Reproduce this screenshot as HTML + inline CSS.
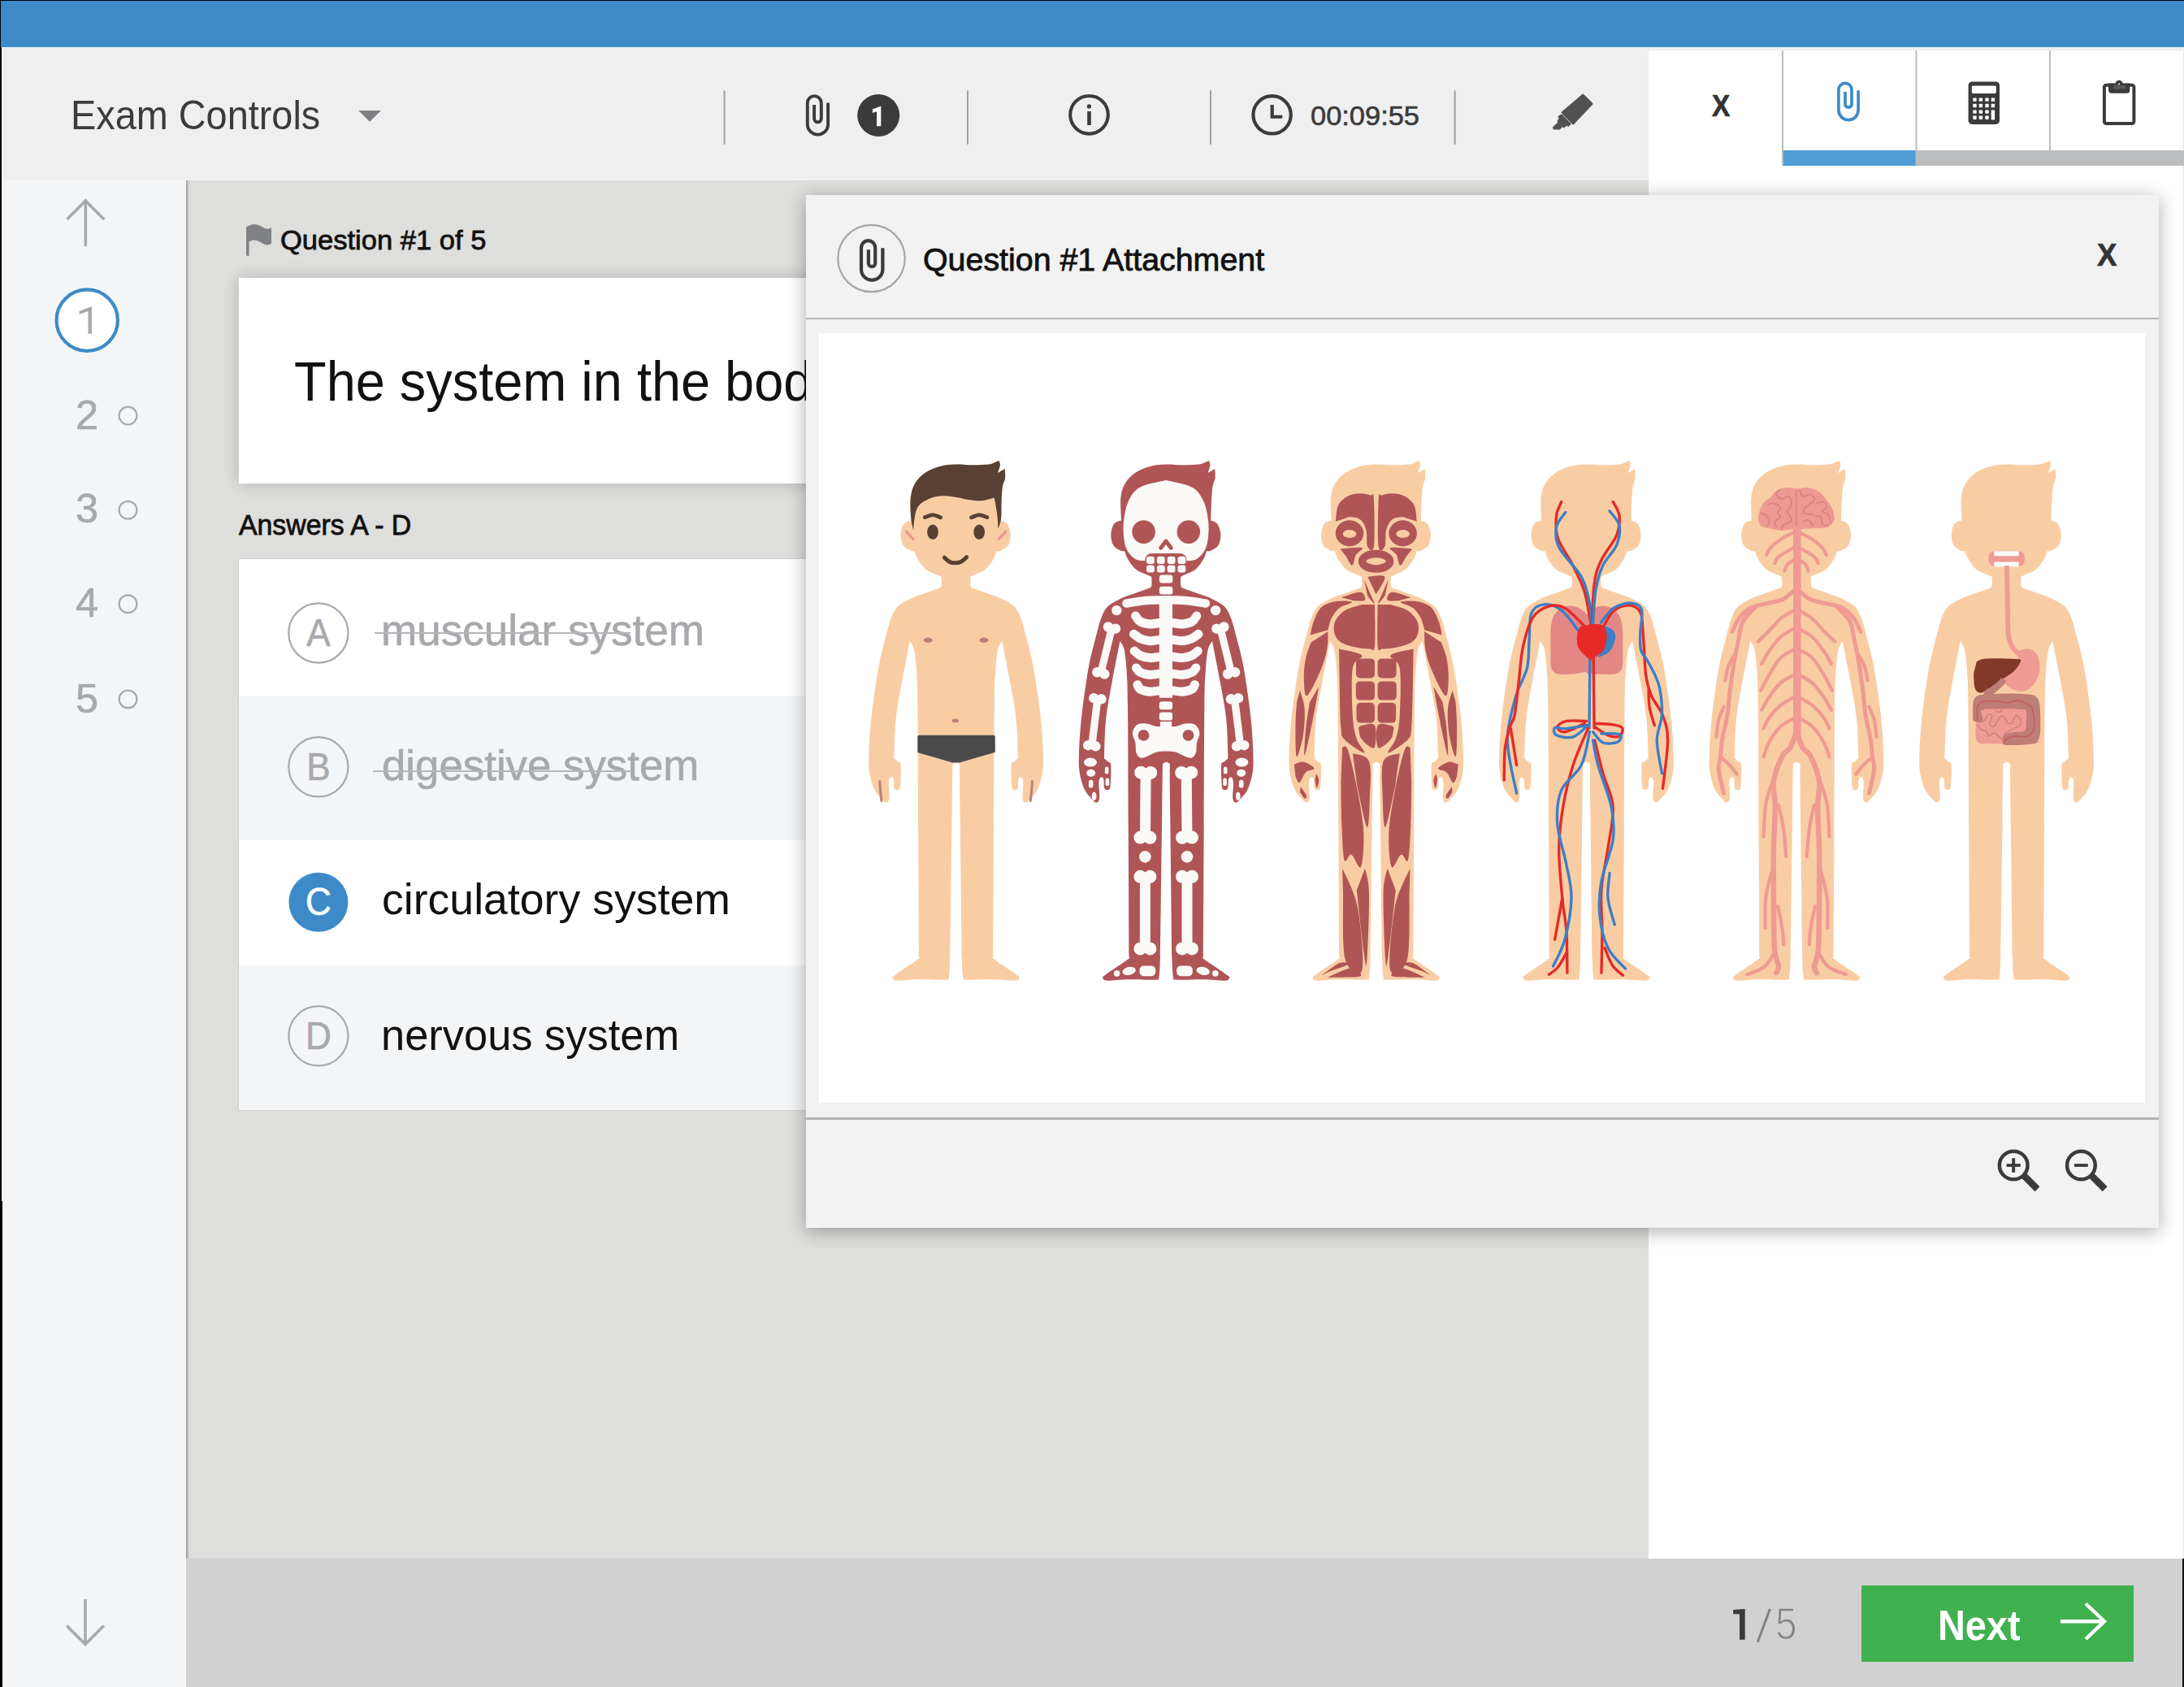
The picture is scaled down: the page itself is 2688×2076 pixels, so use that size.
<!DOCTYPE html>
<html><head><meta charset="utf-8">
<style>
html,body{margin:0;padding:0;}
body{width:2688px;height:2076px;position:relative;overflow:hidden;background:#fff;font-family:"Liberation Sans",sans-serif;}
.a{position:absolute;}
.t{position:absolute;white-space:nowrap;line-height:1;transform-origin:0 0;}
svg{position:absolute;overflow:visible;}
</style></head><body>
<div class="a" style="left:0;top:0;width:2688px;height:1px;background:#000"></div>
<div class="a" style="left:0;top:1px;width:2688px;height:57px;background:#3d8ac8"></div>
<div class="a" style="left:0;top:58px;width:2688px;height:164px;background:#efefef"></div>
<div class="a" style="left:2029px;top:62px;width:658px;height:1856px;background:#fff"></div>
<div class="a" style="left:2687px;top:62px;width:1px;height:1856px;background:#e6e6e6"></div>
<div class="a" style="left:0;top:222px;width:229px;height:1854px;background:#f4f5f7"></div>
<div class="a" style="left:229px;top:222px;width:1800px;height:1696px;background:#dededc;box-shadow:inset 4px 0 3px -2px rgba(0,0,0,0.3)"></div>
<div class="a" style="left:229px;top:1918px;width:2459px;height:158px;background:#d1d1d1"></div>
<div class="a" style="left:2686px;top:1918px;width:2px;height:158px;background:#111"></div>
<div class="a" style="left:0;top:1px;width:1px;height:57px;background:#000"></div>
<div class="a" style="left:0;top:58px;width:2px;height:1420px;background:#000"></div>
<div class="a" style="left:2px;top:58px;width:1px;height:1420px;background:#fff"></div>
<div class="a" style="left:0;top:1478px;width:3px;height:598px;background:#000"></div>
<!-- header icons -->
<svg style="left:0;top:0" width="2688" height="230">
 <path d="M441.2 135.9 L469 135.9 L455.1 149.8 Z" fill="#808185"/>
 <g fill="#a0a1a3"><rect x="890.6" y="111.3" width="2" height="66.5"/><rect x="1190" y="111.3" width="2" height="66.5"/><rect x="1489" y="111.3" width="2" height="66.5"/><rect x="1789.6" y="111.3" width="2" height="66.5"/></g>
 <path d="M1002.1 129 V146 A4.35 4.35 0 0 0 1010.8 146 V126.6 A8.5 8.5 0 0 0 993.8 126.6 V153 A12.65 12.65 0 0 0 1019.1 153 V126.5" fill="none" stroke="#3b3b3b" stroke-width="3.9"/>
 <circle cx="1081.2" cy="141.9" r="26" fill="#3b3b3b"/>
 <circle cx="1340.5" cy="141.3" r="23.3" fill="none" stroke="#3b3b3b" stroke-width="4.1"/>
 <circle cx="1340.4" cy="130.9" r="2.6" fill="#3b3b3b"/>
 <rect x="1338.2" y="137" width="4.6" height="17" fill="#3b3b3b"/>
 <circle cx="1565.6" cy="141.3" r="23.2" fill="none" stroke="#3b3b3b" stroke-width="4.2"/>
 <path d="M1563.6 129 H1567.8 V141.7 H1578.2 V145.7 H1563.6 Z" fill="#3b3b3b"/>
 <g fill="#515151" stroke="#515151" stroke-width="1.5" stroke-linejoin="round">
  <path d="M1922.3 138.4 L1947.8 116.6 Q1948.2 116.2 1948.7 116.6 L1959.5 127.3 Q1960 127.8 1959.5 128.3 L1936.6 152.4 Q1936.2 152.8 1935.7 152.4 Z"/>
  <path d="M1921.8 141 L1932.9 152.4 L1930.4 155.1 L1928.1 153.9 L1924.5 156.6 L1917.1 149.3 L1919.6 145.4 L1918.1 143.5 Z"/>
  <path d="M1917.5 151.2 L1922.1 156 L1919.6 158.7 L1912.3 158.7 L1911.6 157 Z"/>
 </g>
</svg>
<!-- right panel tabs -->
<div class="a" style="left:2194px;top:184.5px;width:164px;height:19px;background:#4f9ed6"></div>
<div class="a" style="left:2358px;top:184.5px;width:330px;height:19px;background:#bcbdbf"></div>
<svg style="left:0;top:0" width="2688" height="230">
 <g fill="#bbbdbf"><rect x="2193" y="62" width="2" height="141"/><rect x="2357.5" y="62" width="2" height="141"/><rect x="2522" y="62" width="2" height="141"/></g>
 <path d="M2271 113 V128.6 A4.04 4.04 0 0 0 2279 128.6 V110.5 A8.05 8.05 0 0 0 2262.9 110.5 V135.6 A12.1 12.1 0 0 0 2287.1 135.6 V111.2" fill="none" stroke="#3d8ac8" stroke-width="3.7"/>
 <rect x="2422.6" y="100.5" width="38.4" height="52.4" rx="4.5" fill="#3b3b3b"/>
 <rect x="2426.8" y="105.6" width="30" height="9.4" rx="1.5" fill="#fff"/>
 <g fill="#fff">
  <rect x="2428.3" y="120.4" width="4.4" height="4.4" rx="0.8"/><rect x="2435.7" y="120.4" width="4.4" height="4.4" rx="0.8"/><rect x="2443.3" y="120.4" width="4.4" height="4.4" rx="0.8"/><rect x="2450.7" y="120.4" width="4.4" height="4.4" rx="0.8"/>
  <rect x="2428.3" y="127.8" width="4.4" height="4.4" rx="0.8"/><rect x="2435.7" y="127.8" width="4.4" height="4.4" rx="0.8"/><rect x="2443.3" y="127.8" width="4.4" height="4.4" rx="0.8"/><rect x="2450.7" y="127.8" width="4.4" height="4.4" rx="0.8"/>
  <rect x="2428.3" y="135.4" width="4.4" height="4.4" rx="0.8"/><rect x="2435.7" y="135.4" width="4.4" height="4.4" rx="0.8"/><rect x="2443.3" y="135.4" width="4.4" height="4.4" rx="0.8"/>
  <rect x="2428.3" y="142.5" width="4.4" height="4.4" rx="0.8"/><rect x="2435.7" y="142.5" width="4.4" height="4.4" rx="0.8"/><rect x="2443.3" y="142.5" width="4.4" height="4.4" rx="0.8"/>
  <rect x="2450.7" y="135.5" width="4.4" height="11.9" rx="0.8"/>
 </g>
 <rect x="2589.9" y="104.8" width="36.5" height="47.2" rx="2.5" fill="none" stroke="#3b3b3b" stroke-width="4"/>
 <path d="M2595 102.6 H2621.4 V110.7 Q2621.4 114.7 2617.4 114.7 H2599 Q2595 114.7 2595 110.7 Z" fill="#3b3b3b"/>
 <circle cx="2608.1" cy="103.5" r="4.7" fill="#3b3b3b"/>
 <circle cx="2608.1" cy="103.5" r="1" fill="#fff"/>
 <rect x="2601" y="104.8" width="15" height="4.7" fill="#555"/>
</svg>
<div class="t" style="left:87.3px;top:116.5px;font-size:50.87px;color:#3b3b3b;font-weight:normal;transform:scaleX(0.9212);">Exam Controls</div>
<div class="t" style="left:1613.1px;top:126.1px;font-size:33.52px;color:#3b3b3b;font-weight:normal;transform:scaleX(1.0269);-webkit-text-stroke:0.6px #3b3b3b;">00:09:55</div>
<svg style="left:0;top:0" width="1200" height="200"><path d="M1084.3 130.8 V155.3 H1079 V137.3 L1073.9 138.9 V134.6 L1083.6 130.8 Z" fill="#fff"/></svg>
<div class="t" style="left:2106.7px;top:113.0px;font-size:36.52px;color:#333;font-weight:bold;transform:scaleX(0.9127);-webkit-text-stroke:0.7px #333;">X</div>
<div class="t" style="left:344.5px;top:278.2px;font-size:34.14px;color:#111;font-weight:normal;transform:scaleX(1.0117);-webkit-text-stroke:0.8px #111;">Question #1 of 5</div>
<svg style="left:0;top:0" width="400" height="2076">
 <path d="M303 279.5 Q313 273 321.5 278.5 Q329 284 334 280.3 V299.3 Q329 304 321.5 298.5 Q313 293 306.5 297.5 V314.8 H303 Z" fill="#808185"/>
 <path d="M105.3 246.5 V303 M82.4 270 L105.3 247.1 L128.2 270" fill="none" stroke="#a7a9ac" stroke-width="3.6"/>
 <path d="M105 1968 V2024.5 M82.1 2000.5 L105 2023.4 L127.9 2000.5" fill="none" stroke="#a7a9ac" stroke-width="3.6"/>
 <circle cx="107.2" cy="394.1" r="37.7" fill="#fff" stroke="#3d8ac8" stroke-width="4.2"/>
 <g fill="none" stroke="#a7a9ac" stroke-width="2.2"><circle cx="157.5" cy="511.6" r="10.9"/><circle cx="157.5" cy="627.8" r="10.9"/><circle cx="157.5" cy="743.3" r="10.9"/><circle cx="157.5" cy="860.4" r="10.9"/></g>
</svg>
<div class="a" style="left:294px;top:341.5px;width:1670px;height:253.5px;background:#fff;box-shadow:0 0 20px rgba(0,0,0,0.2)"></div>
<div class="t" style="left:361.7px;top:436.1px;font-size:67.83px;color:#111;font-weight:normal;transform:scaleX(0.9566);">The system in the body</div>
<div class="t" style="left:294.3px;top:628.8px;font-size:34.43px;color:#111;font-weight:normal;transform:scaleX(0.982);-webkit-text-stroke:0.8px #111;">Answers A - D</div>
<div class="a" style="left:294px;top:687.7px;width:1670px;height:678.7px;box-shadow:0 0 2px rgba(0,0,0,0.18)"></div>
<div class="a" style="left:294px;top:687.7px;width:1670px;height:169.5px;background:#fff"></div>
<div class="a" style="left:294px;top:857.2px;width:1670px;height:177.1px;background:#f4f5f7"></div>
<div class="a" style="left:294px;top:1034.3px;width:1670px;height:153.7px;background:#fff"></div>
<div class="a" style="left:294px;top:1188px;width:1670px;height:178.4px;background:#f4f5f7"></div>
<svg style="left:0;top:0" width="1000" height="1400">
 <g fill="none" stroke="#a7a9ac" stroke-width="2.2"><circle cx="391.9" cy="779" r="36.6"/><circle cx="391.9" cy="943.8" r="36.6"/><circle cx="391.9" cy="1274.8" r="36.6"/></g>
 <circle cx="391.9" cy="1110.3" r="36.5" fill="#3d8ac8"/>
 <g font-family="Liberation Sans" font-size="48" text-anchor="middle" stroke-width="0.6">
  <text x="391.9" y="794.8" fill="#a7a9ac" stroke="#a7a9ac" transform="translate(391.9 0) scale(0.92 1) translate(-391.9 0)">A</text>
  <text x="391.9" y="959.6" fill="#a7a9ac" stroke="#a7a9ac" transform="translate(391.9 0) scale(0.92 1) translate(-391.9 0)">B</text>
  <text x="391.9" y="1126.1" fill="#fff" stroke="#fff" transform="translate(391.9 0) scale(0.92 1) translate(-391.9 0)">C</text>
  <text x="391.9" y="1290.6" fill="#a7a9ac" stroke="#a7a9ac" transform="translate(391.9 0) scale(0.92 1) translate(-391.9 0)">D</text>
 </g>
</svg>
<div class="t" style="left:468.9px;top:748.2px;font-size:54.25px;color:#a7a9ac;font-weight:normal;transform:scaleX(0.9778);-webkit-text-stroke:0.6px #a7a9ac;">muscular system</div>
<div class="t" style="left:470.2px;top:915.5px;font-size:52.43px;color:#a7a9ac;font-weight:normal;transform:scaleX(1.0072);-webkit-text-stroke:0.6px #a7a9ac;">digestive system</div>
<div class="t" style="left:469.6px;top:1079.3px;font-size:54.07px;color:#111;font-weight:normal;transform:scaleX(0.9916);">circulatory system</div>
<div class="t" style="left:469.4px;top:1246.9px;font-size:53.58px;color:#111;font-weight:normal;transform:scaleX(0.9787);">nervous system</div>
<div class="a" style="left:461px;top:778px;width:315px;height:2.2px;background:#b4b5b8"></div>
<div class="a" style="left:459px;top:947.6px;width:317px;height:2.2px;background:#b4b5b8"></div>
<svg style="left:0;top:0" width="200" height="450"><path d="M112.9 377.2 V410.7 H108.5 V383 L97.5 386.8 V383 L112.2 377.2 Z" fill="#a7a9ac"/></svg>
<div class="t" style="left:93.2px;top:486.6px;font-size:49.57px;color:#a7a9ac;font-weight:normal;transform:scaleX(1.0196);-webkit-text-stroke:0.6px #a7a9ac;">2</div>
<div class="t" style="left:93.2px;top:602.1px;font-size:49.57px;color:#a7a9ac;font-weight:normal;transform:scaleX(1.0196);-webkit-text-stroke:0.6px #a7a9ac;">3</div>
<div class="t" style="left:93.2px;top:718.3px;font-size:49.57px;color:#a7a9ac;font-weight:normal;transform:scaleX(1.0196);-webkit-text-stroke:0.6px #a7a9ac;">4</div>
<div class="t" style="left:93.2px;top:835.8px;font-size:49.57px;color:#a7a9ac;font-weight:normal;transform:scaleX(1.0196);-webkit-text-stroke:0.6px #a7a9ac;">5</div>
<svg style="left:0;top:0" width="2688" height="2076"><path d="M2147.7 1980 V2017.7 H2141 V1986.2 L2133.2 1986.2 V1980.9 L2146.8 1980 Z" fill="#3b3b3b"/></svg>
<svg style="left:0;top:0" width="2688" height="2076"><path d="M2163.3 2020.7 L2178.4 1980" stroke="#808185" stroke-width="3"/></svg>
<div class="t" style="left:2185.1px;top:1971.4px;font-size:55.43px;color:#808185;font-weight:normal;transform:scaleX(0.866);-webkit-text-stroke:1.6px #d1d1d1;">5</div>
<div class="a" style="left:2291px;top:1951px;width:334.5px;height:94px;background:#40b14f"></div>
<svg style="left:0;top:0" width="2688" height="2076">
 <path d="M2536 1995.2 H2590 M2567 1973.5 L2590 1995.2 L2567 2017" fill="none" stroke="#fff" stroke-width="4.4"/>
</svg>
<div class="t" style="left:2384.8px;top:1973.7px;font-size:52.32px;color:#fff;font-weight:bold;transform:scaleX(0.8953);">Next</div>

<div class="a" style="left:991.5px;top:240px;width:1665.5px;height:1271px;background:#f2f2f2;box-shadow:0 4px 22px rgba(0,0,0,0.33)"></div>
<div class="a" style="left:991.5px;top:390.5px;width:1665.5px;height:2.5px;background:#b3b4b6"></div>
<div class="a" style="left:991.5px;top:1375px;width:1665.5px;height:2.5px;background:#b3b4b6"></div>
<div class="a" style="left:1008px;top:410px;width:1632px;height:947px;background:#fff"></div>
<svg style="left:0;top:0" width="2688" height="2076">
 <circle cx="1072.5" cy="318" r="41.2" fill="none" stroke="#a5a6a9" stroke-width="2.2"/>
 <path d="M1068.9 307.2 V324 A4.15 4.15 0 0 0 1077.2 324 V304.8 A8.6 8.6 0 0 0 1060 304.8 V331.4 A13.2 13.2 0 0 0 1086.4 331.4 V305.2" fill="none" stroke="#3b3b3b" stroke-width="4.2"/>
 <g fill="none" stroke="#3b3b3b" stroke-width="4.5"><circle cx="2478.2" cy="1434" r="17.35"/><circle cx="2561.4" cy="1434" r="17.35"/></g>
 <g stroke="#3b3b3b" stroke-width="8.3"><path d="M2490.5 1446.3 L2507.5 1463.3"/><path d="M2573.7 1446.3 L2590.7 1463.3"/></g>
 <g fill="#3b3b3b"><rect x="2469.6" y="1432.1" width="17.1" height="3.8"/><rect x="2476.2" y="1425.3" width="3.9" height="17.5"/><rect x="2553" y="1432.1" width="16.8" height="3.8"/></g>
</svg>
<div class="t" style="left:1135.7px;top:301.4px;font-size:38.0px;color:#111;font-weight:normal;transform:scaleX(1.0358);-webkit-text-stroke:0.8px #111;">Question #1 Attachment</div>

<div class="t" style="left:2580.6px;top:293.7px;font-size:39.13px;color:#333;font-weight:bold;transform:scaleX(0.9351);-webkit-text-stroke:0.7px #333;">X</div>

<svg style="left:0;top:0" width="2688" height="2076">
<defs><path id="sil" d="M100.0 173.4 L66.7 185.2 C63.7 186.9 53.4 191.4 48.9 195.6 C44.4 199.8 42.6 203.8 40.0 210.4 C37.4 217.0 35.5 225.6 33.0 235.0 C30.5 244.4 27.5 255.5 25.2 267.0 C22.9 278.5 21.0 291.8 19.3 304.1 C17.6 316.5 15.9 328.8 14.8 341.1 C13.7 353.5 12.8 368.3 12.6 378.2 C12.3 388.1 12.2 393.2 13.3 400.4 C14.4 407.6 16.8 415.8 19.3 421.2 C21.8 426.6 25.9 430.3 28.2 433.0 C30.5 435.7 31.8 437.1 33.3 437.5 C34.8 437.9 36.2 436.7 37.0 435.2 C37.8 433.7 37.8 431.9 37.8 428.6 C37.8 425.3 36.9 418.7 37.0 415.2 C37.1 411.7 37.6 409.3 38.2 407.8 C38.8 406.3 40.4 406.6 40.8 406.3 C41.2 406.8 42.5 407.1 43.0 409.3 C43.5 411.5 43.0 417.6 43.7 419.7 C44.4 421.8 46.2 422.1 47.4 421.9 C48.6 421.6 50.4 423.3 51.1 418.2 C51.9 413.1 52.3 396.6 51.9 391.5 C51.5 386.4 50.1 389.0 48.9 387.8 C47.7 386.6 45.4 385.7 44.5 384.1 C43.6 382.5 43.5 386.6 43.7 378.2 C43.9 369.8 44.3 348.5 45.9 333.7 C47.5 318.9 50.4 305.1 53.3 289.3 C56.1 273.5 61.4 247.3 63.0 238.9 C63.9 240.6 66.9 243.4 68.2 249.3 C69.5 255.2 70.4 262.9 71.1 274.5 C71.8 286.1 72.2 284.6 72.6 318.9 C73.0 353.1 73.2 428.5 73.4 480.0 C73.7 531.5 74.0 603.2 74.1 627.8 C73.8 628.3 77.5 627.1 72.6 630.8 C67.7 634.5 49.6 646.2 44.5 650.0 C39.4 653.8 41.7 652.7 42.2 653.8 C42.7 654.9 42.1 656.5 47.4 656.7 C52.7 656.9 64.2 655.4 74.1 655.2 C84.0 655.0 100.5 656.2 106.7 655.7 C112.9 655.2 110.1 656.9 111.1 652.3 C112.1 647.6 112.3 631.9 112.6 627.8 C113.0 598.2 114.3 489.6 114.8 450.0 C115.3 410.4 115.5 400.0 115.6 390.0 C116.3 389.6 118.5 387.8 120.0 387.8 C121.5 387.8 123.8 389.6 124.5 390.0 C124.1 400.0 124.3 410.4 124.8 450.0 C125.3 489.6 126.6 598.2 127.0 627.8 C127.2 631.9 127.5 647.6 128.5 652.3 C129.5 656.9 126.7 655.2 132.9 655.7 C139.1 656.2 155.6 655.0 165.5 655.2 C175.4 655.4 186.9 656.9 192.2 656.7 C197.5 656.5 196.9 654.9 197.4 653.8 C197.9 652.7 200.2 653.8 195.1 650.0 C190.0 646.2 171.9 634.5 167.0 630.8 C162.1 627.1 165.8 628.3 165.5 627.8 C165.6 603.2 165.9 531.5 166.2 480.0 C166.4 428.5 166.6 353.1 167.0 318.9 C167.4 284.6 167.8 286.1 168.5 274.5 C169.2 262.9 170.0 255.2 171.4 249.3 C172.7 243.4 175.7 240.6 176.6 238.9 C178.2 247.3 183.5 273.5 186.3 289.3 C189.2 305.1 192.1 318.9 193.7 333.7 C195.3 348.5 195.7 369.8 195.9 378.2 C196.1 386.6 196.0 382.5 195.1 384.1 C194.2 385.7 191.9 386.6 190.7 387.8 C189.5 389.0 188.1 386.4 187.7 391.5 C187.3 396.6 187.8 413.1 188.5 418.2 C189.2 423.3 191.0 421.6 192.2 421.9 C193.4 422.1 195.2 421.8 195.9 419.7 C196.6 417.6 196.1 411.5 196.6 409.3 C197.1 407.1 198.4 406.8 198.8 406.3 C199.2 406.6 200.8 406.3 201.4 407.8 C202.0 409.3 202.5 411.7 202.6 415.2 C202.7 418.7 201.8 425.3 201.8 428.6 C201.8 431.9 201.8 433.7 202.6 435.2 C203.3 436.7 204.8 437.9 206.3 437.5 C207.8 437.1 209.1 435.7 211.4 433.0 C213.7 430.3 217.8 426.6 220.3 421.2 C222.8 415.8 225.2 407.6 226.3 400.4 C227.4 393.2 227.2 388.1 227.0 378.2 C226.8 368.3 225.9 353.5 224.8 341.1 C223.7 328.8 222.0 316.5 220.3 304.1 C218.6 291.8 216.7 278.5 214.4 267.0 C212.1 255.5 209.1 244.4 206.6 235.0 C204.1 225.6 202.2 217.0 199.6 210.4 C196.9 203.8 195.1 199.8 190.7 195.6 C186.2 191.4 175.9 186.9 172.9 185.2 L139.6 173.4 C139.6 172.9 138.2 172.4 137.8 170.4 C137.4 168.4 137.8 163.0 137.8 161.5 C137.9 161.1 137.1 160.3 138.6 159.3 C140.1 158.3 143.6 157.2 146.7 155.6 C149.8 154.0 153.9 152.7 157.1 149.7 C160.3 146.7 163.9 141.4 166.0 137.8 C168.1 134.2 169.1 129.8 169.7 128.2 C170.6 128.1 172.6 128.5 174.9 127.4 C177.2 126.3 181.8 124.7 183.8 121.5 C185.8 118.3 187.1 112.7 187.0 108.2 C186.9 103.8 185.0 97.8 183.0 94.8 C181.0 91.8 176.2 91.1 174.9 90.4 C174.9 90.2 174.8 92.9 174.9 88.9 C175.0 85.0 175.2 73.4 175.6 66.7 C176.0 60.0 176.3 53.6 177.1 48.9 C177.8 44.2 179.6 42.1 180.1 38.5 C180.6 34.9 179.9 28.9 179.8 27.0 L171.2 31.9 C171.7 30.3 173.9 24.7 174.1 22.2 C174.3 19.7 172.8 17.9 172.6 17.0 C172.0 17.2 171.0 17.8 168.9 18.5 C166.8 19.2 164.7 20.9 160.0 21.5 C155.3 22.1 147.7 22.2 140.8 22.2 C133.9 22.2 125.3 21.2 118.6 21.5 C111.9 21.8 106.7 22.1 100.8 23.7 C94.9 25.3 88.2 27.6 83.0 31.1 C77.8 34.6 72.8 39.3 69.6 44.5 C66.4 49.7 64.8 54.8 64.0 62.2 C63.1 69.6 64.5 84.2 64.5 88.9 C64.5 93.6 63.8 90.2 63.7 90.4 C62.4 91.1 57.6 91.8 55.6 94.8 C53.6 97.8 52.0 103.8 51.9 108.2 C51.8 112.7 53.1 118.3 55.1 121.5 C57.1 124.7 61.4 126.3 63.7 127.4 C66.0 128.5 68.0 128.1 68.9 128.2 C69.5 129.8 70.5 134.2 72.6 137.8 C74.7 141.4 78.3 146.7 81.5 149.7 C84.7 152.7 88.7 154.0 91.9 155.6 C95.1 157.2 99.1 158.3 100.8 159.3 C102.5 160.3 101.8 161.1 102.0 161.5 C102.0 163.0 102.3 168.4 102.0 170.4 C101.7 172.4 100.3 172.9 100.0 173.4 Z"/><clipPath id="csil"><use href="#sil"/></clipPath></defs>
<g transform="translate(1056.8 550)">
<use href="#sil" fill="#f9cda4"/><path d="M67.2 102.1 C66.7 99.4 64.8 92.7 64.3 86.0 C63.8 79.3 63.1 69.1 64.0 62.2 C64.9 55.3 66.4 49.7 69.6 44.5 C72.8 39.3 77.8 34.6 83.0 31.1 C88.2 27.6 94.9 25.3 100.8 23.7 C106.7 22.1 111.9 21.8 118.6 21.5 C125.3 21.2 133.9 22.2 140.8 22.2 C147.7 22.2 155.3 22.1 160.0 21.5 C164.7 20.9 166.8 19.2 168.9 18.5 C171.0 17.8 172.0 17.2 172.6 17.0 C172.8 17.9 174.3 19.7 174.1 22.2 C173.9 24.7 171.7 30.3 171.2 31.9 L179.8 27.0 C179.9 28.9 180.8 34.9 180.3 38.5 C179.9 42.1 177.8 44.2 177.1 48.9 C176.3 53.6 176.1 60.2 175.8 66.7 C175.5 73.2 176.1 82.3 175.4 88.0 C174.7 93.7 172.3 98.8 171.7 101.0 C171.6 99.2 171.6 94.8 171.2 90.3 C170.8 85.8 169.8 78.9 169.1 74.3 C168.4 69.7 167.3 64.5 166.9 62.6 C165.8 62.9 163.3 63.6 160.5 64.2 C157.7 64.8 154.3 66.2 149.9 66.3 C145.5 66.4 139.2 65.5 133.9 64.7 C128.6 63.9 123.6 62.2 117.9 61.5 C112.2 60.8 105.0 60.0 99.7 60.5 C94.4 61.0 90.0 62.4 85.9 64.2 C81.8 66.0 77.9 68.2 75.2 71.1 C72.5 74.0 71.2 76.6 69.9 81.8 C68.6 87.0 67.7 98.7 67.2 102.1 Z" fill="#584033"/><ellipse cx="91.2" cy="104.7" rx="6.9" ry="9.1" fill="#574032" /><ellipse cx="148.4" cy="104.7" rx="6.9" ry="9.1" fill="#574032" /><path d="M81.6 86.6 C83.2 86.1 88.0 83.6 91.2 83.6 C94.4 83.6 99.2 86.3 100.8 86.8" fill="none" stroke="#574032" stroke-width="4.8" stroke-linecap="round" stroke-linejoin="round"/><path d="M158.0 86.6 C156.4 86.1 151.6 83.6 148.4 83.6 C145.2 83.6 140.4 86.3 138.8 86.8" fill="none" stroke="#574032" stroke-width="4.8" stroke-linecap="round" stroke-linejoin="round"/><path d="M105.6 136.2 C106.7 137.1 109.8 140.4 112.0 141.5 C114.2 142.6 116.6 142.9 118.9 142.8 C121.2 142.8 123.7 142.4 126.0 141.2 C128.3 140.0 131.7 136.6 132.8 135.7" fill="none" stroke="#574032" stroke-width="5" stroke-linecap="round" stroke-linejoin="round"/><path d="M58.6 104.2 L67.0 113.3" fill="none" stroke="#ec9a96" stroke-width="3.6" stroke-linecap="round" stroke-linejoin="round"/><path d="M181.0 104.2 L172.6 113.3" fill="none" stroke="#ec9a96" stroke-width="3.6" stroke-linecap="round" stroke-linejoin="round"/><ellipse cx="85.4" cy="237.7" rx="5.5" ry="3.1" fill="#bd8079" /><ellipse cx="154.2" cy="237.7" rx="5.5" ry="3.1" fill="#bd8079" /><ellipse cx="119.1" cy="336.9" rx="4.2" ry="2.3" fill="#bd8079" /><path d="M72.5 356.8 Q72.5 354.8 74.5 354.8 H166 Q168 354.8 168 356.8 V375.7 L124.1 388.5 H115.6 L72.5 375.9 Z" fill="#4a4a4a"/><path d="M26.0 411.5 C26.1 413.6 26.4 420.0 26.8 424.0 C27.2 428.0 27.9 433.6 28.1 435.5" fill="none" stroke="#bd8079" stroke-width="3" stroke-linecap="round" stroke-linejoin="round"/><path d="M213.6 411.5 C213.5 413.6 213.1 420.0 212.8 424.0 C212.4 428.0 211.7 433.6 211.5 435.5" fill="none" stroke="#bd8079" stroke-width="3" stroke-linecap="round" stroke-linejoin="round"/>
</g>
<g transform="translate(1315.4 550)">
<use href="#sil" fill="#b05556"/><path d="M119.6 41.1 C124.9 42.5 143.7 45.4 151.3 49.5 C159.0 53.6 162.1 59.2 165.5 66.0 C168.9 72.8 170.6 82.3 171.6 90.0 C172.6 97.7 172.2 105.8 171.5 112.0 C170.8 118.2 169.7 122.8 167.5 127.0 C165.3 131.2 161.7 135.0 158.4 137.2 C155.1 139.4 154.2 139.5 147.7 140.1 C141.2 140.7 128.9 141.0 119.6 141.0 C110.3 141.0 98.5 140.7 92.0 140.1 C85.5 139.5 84.2 139.4 80.8 137.2 C77.4 135.0 74.0 131.2 71.8 127.0 C69.6 122.8 68.5 118.2 67.8 112.0 C67.1 105.8 66.8 97.7 67.8 90.0 C68.8 82.3 70.4 72.8 73.8 66.0 C77.2 59.2 80.4 53.6 88.0 49.5 C95.6 45.4 114.3 42.5 119.6 41.1 Z" fill="#faf9f6"/><circle cx="92.2" cy="104.6" r="14.3" fill="#b05556"/><circle cx="147.4" cy="104.6" r="14.3" fill="#b05556"/><path d="M113.3 124.2 L119.6 116 L125.9 124.2" fill="none" stroke="#b05556" stroke-width="5" stroke-linecap="round" stroke-linejoin="round"/><rect x="94" y="131" width="51" height="26" rx="8" fill="#b05556"/><rect x="95.7" y="134.7" width="9.8" height="9.2" rx="3" fill="#faf9f6"/><rect x="95.7" y="145.4" width="9.8" height="9.2" rx="3" fill="#faf9f6"/><rect x="108.5" y="134.7" width="9.8" height="9.2" rx="3" fill="#faf9f6"/><rect x="108.5" y="145.4" width="9.8" height="9.2" rx="3" fill="#faf9f6"/><rect x="121.3" y="134.7" width="9.8" height="9.2" rx="3" fill="#faf9f6"/><rect x="121.3" y="145.4" width="9.8" height="9.2" rx="3" fill="#faf9f6"/><rect x="134.1" y="134.7" width="9.8" height="9.2" rx="3" fill="#faf9f6"/><rect x="134.1" y="145.4" width="9.8" height="9.2" rx="3" fill="#faf9f6"/><rect x="111.5" y="157.6" width="16.4" height="9.8" rx="3" fill="#faf9f6"/><rect x="111.5" y="171.8" width="16.4" height="9.8" rx="3" fill="#faf9f6"/><path d="M71.0 192.5 C75.0 191.9 86.9 189.7 95.0 189.0 C103.1 188.3 111.4 188.3 119.6 188.3 C127.8 188.3 135.8 188.3 144.0 189.0 C152.2 189.7 164.4 191.9 168.5 192.5" fill="none" stroke="#faf9f6" stroke-width="10.5" stroke-linecap="round"/><rect x="111.4" y="188" width="16.2" height="120.7" fill="#faf9f6"/><rect x="111.4" y="313.3" width="16.2" height="10" rx="3" fill="#faf9f6"/><rect x="111.4" y="326.4" width="16.2" height="10" rx="3" fill="#faf9f6"/><circle cx="58.9" cy="201.1" r="6.2" fill="#faf9f6"/><circle cx="180.7" cy="201.1" r="6.2" fill="#faf9f6"/><path d="M112.0 216.4 C110.0 216.7 104.0 218.2 100.0 217.9 C96.0 217.7 91.0 216.6 88.0 214.9 C85.0 213.2 83.2 209.2 82.3 208.0" fill="none" stroke="#faf9f6" stroke-width="11" stroke-linecap="round" stroke-linejoin="round"/><path d="M127.6 216.4 C129.6 216.7 135.6 218.2 139.6 217.9 C143.6 217.7 148.6 216.6 151.6 214.9 C154.6 213.2 156.4 209.2 157.3 208.0" fill="none" stroke="#faf9f6" stroke-width="11" stroke-linecap="round" stroke-linejoin="round"/><path d="M112.0 237.2 C110.0 237.4 104.0 238.9 100.0 238.7 C96.0 238.4 91.3 237.1 88.0 235.7 C84.7 234.3 81.3 231.2 80.0 230.3" fill="none" stroke="#faf9f6" stroke-width="11" stroke-linecap="round" stroke-linejoin="round"/><path d="M127.6 237.2 C129.6 237.4 135.6 238.9 139.6 238.7 C143.6 238.4 148.3 237.1 151.6 235.7 C154.9 234.3 158.3 231.2 159.6 230.3" fill="none" stroke="#faf9f6" stroke-width="11" stroke-linecap="round" stroke-linejoin="round"/><path d="M112.0 258.1 C110.0 258.4 104.0 259.9 100.0 259.6 C96.0 259.4 91.2 258.0 88.0 256.6 C84.8 255.2 82.0 252.0 80.8 251.1" fill="none" stroke="#faf9f6" stroke-width="11" stroke-linecap="round" stroke-linejoin="round"/><path d="M127.6 258.1 C129.6 258.4 135.6 259.9 139.6 259.6 C143.6 259.4 148.4 258.0 151.6 256.6 C154.8 255.2 157.6 252.0 158.8 251.1" fill="none" stroke="#faf9f6" stroke-width="11" stroke-linecap="round" stroke-linejoin="round"/><path d="M112.0 278.9 C110.0 279.1 104.0 280.6 100.0 280.4 C96.0 280.1 90.8 278.8 88.0 277.4 C85.2 276.0 83.9 272.8 83.1 271.9" fill="none" stroke="#faf9f6" stroke-width="11" stroke-linecap="round" stroke-linejoin="round"/><path d="M127.6 278.9 C129.6 279.1 135.6 280.6 139.6 280.4 C143.6 280.1 148.8 278.8 151.6 277.4 C154.4 276.0 155.7 272.8 156.5 271.9" fill="none" stroke="#faf9f6" stroke-width="11" stroke-linecap="round" stroke-linejoin="round"/><path d="M112.0 299.7 C110.0 299.9 104.0 301.4 100.0 301.2 C96.0 300.9 90.6 299.6 88.0 298.2 C85.4 296.8 85.2 293.6 84.6 292.7" fill="none" stroke="#faf9f6" stroke-width="11" stroke-linecap="round" stroke-linejoin="round"/><path d="M127.6 299.7 C129.6 299.9 135.6 301.4 139.6 301.2 C143.6 300.9 149.0 299.6 151.6 298.2 C154.2 296.8 154.4 293.6 155.0 292.7" fill="none" stroke="#faf9f6" stroke-width="11" stroke-linecap="round" stroke-linejoin="round"/><line x1="53.6" y1="220.5" x2="38.9" y2="280.5" stroke="#faf9f6" stroke-width="9.2"/><circle cx="57.6" cy="223.7" r="6.2" fill="#faf9f6"/><circle cx="48.6" cy="221.5" r="6.2" fill="#faf9f6"/><circle cx="43.9" cy="279.5" r="6.2" fill="#faf9f6"/><circle cx="34.9" cy="277.3" r="6.2" fill="#faf9f6"/><line x1="186.0" y1="220.5" x2="200.7" y2="280.5" stroke="#faf9f6" stroke-width="9.2"/><circle cx="191.0" cy="221.5" r="6.2" fill="#faf9f6"/><circle cx="182.0" cy="223.7" r="6.2" fill="#faf9f6"/><circle cx="204.7" cy="277.3" r="6.2" fill="#faf9f6"/><circle cx="195.7" cy="279.5" r="6.2" fill="#faf9f6"/><line x1="35.8" y1="307.6" x2="28.1" y2="369.9" stroke="#faf9f6" stroke-width="9.2"/><circle cx="40.1" cy="310.3" r="6.2" fill="#faf9f6"/><circle cx="30.9" cy="309.2" r="6.2" fill="#faf9f6"/><circle cx="33.0" cy="368.3" r="6.2" fill="#faf9f6"/><circle cx="23.8" cy="367.2" r="6.2" fill="#faf9f6"/><line x1="203.8" y1="307.6" x2="211.5" y2="369.9" stroke="#faf9f6" stroke-width="9.2"/><circle cx="208.7" cy="309.2" r="6.2" fill="#faf9f6"/><circle cx="199.5" cy="310.3" r="6.2" fill="#faf9f6"/><circle cx="215.8" cy="367.2" r="6.2" fill="#faf9f6"/><circle cx="206.6" cy="368.3" r="6.2" fill="#faf9f6"/><ellipse cx="26.6" cy="388.1" rx="8" ry="5.5" fill="#faf9f6" /><ellipse cx="213.0" cy="388.1" rx="8" ry="5.5" fill="#faf9f6" /><ellipse cx="27.3" cy="401.2" rx="5.5" ry="4.5" fill="#faf9f6" /><ellipse cx="212.3" cy="401.2" rx="5.5" ry="4.5" fill="#faf9f6" /><rect x="24.5" y="409.8" width="5.6" height="9.6" rx="2.6" fill="#faf9f6"/><rect x="209.5" y="409.8" width="5.6" height="9.6" rx="2.6" fill="#faf9f6"/><ellipse cx="31.2" cy="429.7" rx="2.9" ry="5.2" fill="#faf9f6" /><ellipse cx="208.4" cy="429.7" rx="2.9" ry="5.2" fill="#faf9f6" /><rect x="44.5" y="393.5" width="4.6" height="9" rx="2.2" fill="#faf9f6"/><rect x="190.5" y="393.5" width="4.6" height="9" rx="2.2" fill="#faf9f6"/><rect x="45.2" y="407.5" width="4.6" height="9.6" rx="2.2" fill="#faf9f6"/><rect x="189.8" y="407.5" width="4.6" height="9.6" rx="2.2" fill="#faf9f6"/><path d="M119.6 343.5 C117.7 343.6 111.9 344.5 108.0 344.0 C104.1 343.5 100.0 340.8 96.0 340.5 C92.0 340.2 86.9 340.1 84.0 342.0 C81.1 343.9 78.8 348.3 78.5 352.0 C78.2 355.7 81.2 360.0 82.0 364.0 C82.8 368.0 82.0 372.9 83.0 376.0 C84.0 379.1 85.8 381.7 88.0 382.5 C90.2 383.3 92.7 382.2 96.0 381.0 C99.3 379.8 104.1 376.6 108.0 375.5 C111.9 374.4 115.7 374.5 119.6 374.5 C123.5 374.5 127.6 374.4 131.6 375.5 C135.6 376.6 140.3 379.8 143.6 381.0 C146.9 382.2 149.4 383.3 151.6 382.5 C153.8 381.7 155.6 379.1 156.6 376.0 C157.6 372.9 156.8 368.0 157.6 364.0 C158.3 360.0 161.4 355.7 161.1 352.0 C160.8 348.3 158.5 343.9 155.6 342.0 C152.7 340.1 147.6 340.2 143.6 340.5 C139.6 340.8 135.5 343.5 131.6 344.0 C127.7 344.5 121.9 343.6 120.0 343.5 Z" fill="#faf9f6"/><rect x="112.5" y="338" width="14.2" height="10" fill="#faf9f6"/><circle cx="92.1" cy="354.9" r="6.9" fill="#b05556"/><circle cx="147.1" cy="354.9" r="6.9" fill="#b05556"/><line x1="94.8" y1="398.0" x2="94.0" y2="483.5" stroke="#faf9f6" stroke-width="13"/><circle cx="100.8" cy="400.9" r="8.0" fill="#faf9f6"/><circle cx="88.8" cy="400.7" r="8.0" fill="#faf9f6"/><circle cx="100.0" cy="480.8" r="8.0" fill="#faf9f6"/><circle cx="88.0" cy="480.6" r="8.0" fill="#faf9f6"/><line x1="144.8" y1="398.0" x2="145.6" y2="483.5" stroke="#faf9f6" stroke-width="13"/><circle cx="150.8" cy="400.7" r="8.0" fill="#faf9f6"/><circle cx="138.8" cy="400.9" r="8.0" fill="#faf9f6"/><circle cx="151.6" cy="480.6" r="8.0" fill="#faf9f6"/><circle cx="139.6" cy="480.8" r="8.0" fill="#faf9f6"/><circle cx="94" cy="504.4" r="7.3" fill="#faf9f6"/><circle cx="145.6" cy="504.4" r="7.3" fill="#faf9f6"/><line x1="94.0" y1="526.0" x2="94.0" y2="620.2" stroke="#faf9f6" stroke-width="13"/><circle cx="100.0" cy="528.8" r="8.0" fill="#faf9f6"/><circle cx="88.0" cy="528.8" r="8.0" fill="#faf9f6"/><circle cx="100.0" cy="617.4" r="8.0" fill="#faf9f6"/><circle cx="88.0" cy="617.4" r="8.0" fill="#faf9f6"/><line x1="145.6" y1="526.0" x2="145.6" y2="620.2" stroke="#faf9f6" stroke-width="13"/><circle cx="151.6" cy="528.8" r="8.0" fill="#faf9f6"/><circle cx="139.6" cy="528.8" r="8.0" fill="#faf9f6"/><circle cx="151.6" cy="617.4" r="8.0" fill="#faf9f6"/><circle cx="139.6" cy="617.4" r="8.0" fill="#faf9f6"/><rect x="87.2" y="638.5" width="19.6" height="12.8" rx="5" fill="#faf9f6"/><rect x="132.8" y="638.5" width="19.6" height="12.8" rx="5" fill="#faf9f6"/><ellipse cx="74.3" cy="644.9" rx="8.3" ry="4.9" fill="#faf9f6" transform="rotate(-12 74.3 644.9)"/><ellipse cx="165.3" cy="644.9" rx="8.3" ry="4.9" fill="#faf9f6" transform="rotate(12 165.3 644.9)"/><circle cx="59.2" cy="647.9" r="3.8" fill="#faf9f6"/><circle cx="180.4" cy="647.9" r="3.8" fill="#faf9f6"/>
</g>
<g transform="translate(1574.0 550)">
<use href="#sil" fill="#f9cda4"/><path d="M38.8 231.6 C39.5 228.8 40.5 220.5 42.8 214.8 C45.1 209.1 47.9 201.3 52.4 197.2 C56.9 193.1 63.7 191.1 70.0 190.0 C76.3 188.9 89.2 189.5 90.0 190.8 C90.8 192.1 78.9 194.8 74.8 198.0 C70.7 201.2 67.6 205.5 65.2 210.0 C62.8 214.5 61.2 222.7 60.4 225.2 Z" fill="#b05556"/><path d="M200.8 231.6 C200.1 228.8 199.1 220.5 196.8 214.8 C194.5 209.1 191.7 201.3 187.2 197.2 C182.7 193.1 175.9 191.1 169.6 190.0 C163.3 188.9 150.4 189.5 149.6 190.8 C148.8 192.1 160.7 194.8 164.8 198.0 C168.9 201.2 172.0 205.5 174.4 210.0 C176.8 214.5 178.4 222.7 179.2 225.2 Z" fill="#b05556"/><path d="M118.0 194.0 C118.0 202.5 119.1 236.1 118.0 245.2 C116.9 254.3 115.3 248.1 111.6 248.4 C107.9 248.7 101.5 248.1 95.6 246.8 C89.7 245.5 80.9 243.3 76.4 240.4 C71.9 237.5 69.6 233.5 68.4 229.2 C67.2 224.9 67.1 219.5 69.2 214.8 C71.3 210.1 75.7 204.7 81.2 201.2 C86.7 197.7 98.5 195.2 102.0 194.0 Z" fill="#b05556"/><path d="M121.6 194.0 C121.6 202.5 120.5 236.1 121.6 245.2 C122.7 254.3 124.3 248.1 128.0 248.4 C131.7 248.7 138.1 248.1 144.0 246.8 C149.9 245.5 158.7 243.3 163.2 240.4 C167.7 237.5 170.0 233.5 171.2 229.2 C172.4 224.9 172.5 219.5 170.4 214.8 C168.3 210.1 163.9 204.7 158.4 201.2 C152.9 197.7 141.1 195.2 137.6 194.0 Z" fill="#b05556"/><path d="M77.2 185.2 C81.1 184.1 95.6 178.3 100.4 178.8 C105.2 179.3 107.3 186.7 106.0 188.4 C104.7 190.1 94.7 189.1 92.4 189.2 Z" fill="#b05556"/><path d="M162.4 185.2 C158.5 184.1 144.0 178.3 139.2 178.8 C134.4 179.3 132.3 186.7 133.6 188.4 C134.9 190.1 144.9 189.1 147.2 189.2 Z" fill="#b05556"/><path d="M60.4 227.0 C60.3 230.3 60.9 239.2 59.6 246.8 C58.3 254.4 56.5 262.5 52.4 272.4 C48.3 282.3 38.4 303.9 34.8 306.0 C31.2 308.1 31.1 292.9 30.8 285.2 C30.5 277.5 31.7 267.1 33.2 259.6 C34.7 252.1 38.5 243.6 39.6 240.4 Z" fill="#b05556"/><path d="M179.2 227.0 C179.3 230.3 178.7 239.2 180.0 246.8 C181.3 254.4 183.1 262.5 187.2 272.4 C191.3 282.3 201.2 303.9 204.8 306.0 C208.4 308.1 208.5 292.9 208.8 285.2 C209.1 277.5 207.9 267.1 206.4 259.6 C204.9 252.1 201.1 243.6 200.0 240.4 Z" fill="#b05556"/><path d="M26.0 299.6 C26.9 303.3 30.9 312.9 31.6 322.0 C32.3 331.1 31.6 344.1 30.0 354.0 C28.4 363.9 23.6 382.5 22.0 381.2 C20.4 379.9 20.4 357.2 20.4 346.0 C20.4 334.8 21.7 319.3 22.0 314.0 Z" fill="#b05556"/><path d="M213.6 299.6 C212.7 303.3 208.7 312.9 208.0 322.0 C207.3 331.1 208.0 344.1 209.6 354.0 C211.2 363.9 216.0 382.5 217.6 381.2 C219.2 379.9 219.2 357.2 219.2 346.0 C219.2 334.8 217.9 319.3 217.6 314.0 Z" fill="#b05556"/><path d="M49.2 294.8 C48.4 299.3 46.3 312.1 44.4 322.0 C42.5 331.9 40.1 344.4 38.0 354.0 C35.9 363.6 32.4 380.9 31.6 379.6 C30.8 378.3 32.1 356.9 33.2 346.0 C34.3 335.1 37.2 319.3 38.0 314.0 Z" fill="#b05556"/><path d="M190.4 294.8 C191.2 299.3 193.3 312.1 195.2 322.0 C197.1 331.9 199.5 344.4 201.6 354.0 C203.7 363.6 207.2 380.9 208.0 379.6 C208.8 378.3 207.5 356.9 206.4 346.0 C205.3 335.1 202.4 319.3 201.6 314.0 Z" fill="#b05556"/><path d="M18.8 390.8 C20.7 390.3 25.9 386.8 30.0 387.6 C34.1 388.4 43.1 393.5 43.6 395.6 C44.1 397.7 36.3 397.5 33.2 400.4 C30.1 403.3 27.3 412.4 25.2 413.2 C23.1 414.0 21.2 406.5 20.4 405.2 Z" fill="#b05556"/><path d="M220.8 390.8 C218.9 390.3 213.7 386.8 209.6 387.6 C205.5 388.4 196.5 393.5 196.0 395.6 C195.5 397.7 203.3 397.5 206.4 400.4 C209.5 403.3 212.3 412.4 214.4 413.2 C216.5 414.0 218.4 406.5 219.2 405.2 Z" fill="#b05556"/><path d="M46.0 402.0 C46.5 403.3 49.1 407.1 49.2 410.0 C49.3 412.9 47.6 419.6 46.8 419.6 C46.0 419.6 44.8 411.6 44.4 410.0 Z" fill="#b05556"/><path d="M193.6 402.0 C193.1 403.3 190.5 407.1 190.4 410.0 C190.3 412.9 192.0 419.6 192.8 419.6 C193.6 419.6 194.8 411.6 195.2 410.0 Z" fill="#b05556"/><path d="M26.8 418.0 C28.0 419.9 33.2 426.8 34.0 429.2 C34.8 431.6 32.9 433.2 31.6 432.4 C30.3 431.6 26.9 425.7 26.0 424.4 Z" fill="#b05556"/><path d="M212.8 418.0 C211.6 419.9 206.4 426.8 205.6 429.2 C204.8 431.6 206.7 433.2 208.0 432.4 C209.3 431.6 212.7 425.7 213.6 424.4 Z" fill="#b05556"/><path d="M74.0 248.4 C78.7 249.7 99.2 252.4 102.0 256.4 C104.8 260.4 92.7 260.1 90.8 272.4 C88.9 284.7 90.0 315.6 90.8 330.0 C91.6 344.4 93.2 351.1 95.6 358.8 C98.0 366.5 107.6 376.1 105.2 376.4 C102.8 376.7 86.0 365.5 81.2 360.4 C76.4 355.3 77.5 356.4 76.4 346.0 C75.3 335.6 75.1 306.0 74.8 298.0 Z" fill="#b05556"/><path d="M165.6 248.4 C160.9 249.7 140.4 252.4 137.6 256.4 C134.8 260.4 146.9 260.1 148.8 272.4 C150.7 284.7 149.6 315.6 148.8 330.0 C148.0 344.4 146.4 351.1 144.0 358.8 C141.6 366.5 132.0 376.1 134.4 376.4 C136.8 376.7 153.6 365.5 158.4 360.4 C163.2 355.3 162.1 356.4 163.2 346.0 C164.3 335.6 164.5 306.0 164.8 298.0 Z" fill="#b05556"/><rect x="95" y="260.4" width="23.0" height="24.0" rx="5" fill="#b05556"/><rect x="121.6" y="260.4" width="23.0" height="24.0" rx="5" fill="#b05556"/><rect x="94.8" y="288.4" width="23.2" height="23.2" rx="5" fill="#b05556"/><rect x="121.6" y="288.4" width="23.2" height="23.2" rx="5" fill="#b05556"/><rect x="95.5" y="314.8" width="22.5" height="24.8" rx="5" fill="#b05556"/><rect x="121.6" y="314.8" width="22.5" height="24.8" rx="5" fill="#b05556"/><path d="M98.0 346.0 C98.7 345.5 98.7 343.3 102.0 342.8 C105.3 342.3 115.3 338.4 118.0 342.8 C120.7 347.2 119.7 365.3 118.0 369.2 C116.3 373.1 111.0 368.0 108.0 366.0 C105.0 364.0 101.3 358.5 100.0 357.0 Z" fill="#b05556"/><path d="M141.6 346.0 C140.9 345.5 140.9 343.3 137.6 342.8 C134.3 342.3 124.3 338.4 121.6 342.8 C118.9 347.2 119.9 365.3 121.6 369.2 C123.3 373.1 128.6 368.0 131.6 366.0 C134.6 364.0 138.3 358.5 139.6 357.0 Z" fill="#b05556"/><path d="M78.0 370.0 C79.2 370.5 81.9 364.3 85.0 373.0 C88.1 381.7 93.5 405.3 96.7 422.2 C99.9 439.1 103.6 458.8 104.3 474.6 C105.0 490.4 103.4 512.3 100.9 516.8 C98.4 521.3 92.5 503.0 89.1 501.6 C85.7 500.2 82.6 514.6 80.6 508.4 C78.6 502.2 78.0 480.3 77.3 464.5 C76.6 448.7 76.6 422.2 76.4 413.8 Z" fill="#b05556"/><path d="M161.6 370.0 C160.4 370.5 157.7 364.3 154.6 373.0 C151.5 381.7 146.1 405.3 142.9 422.2 C139.7 439.1 136.0 458.8 135.3 474.6 C134.6 490.4 136.2 512.3 138.7 516.8 C141.2 521.3 147.1 503.0 150.5 501.6 C153.9 500.2 157.0 514.6 159.0 508.4 C161.0 502.2 161.6 480.3 162.3 464.5 C163.0 448.7 163.0 422.2 163.2 413.8 Z" fill="#b05556"/><path d="M90.8 377.0 C94.2 378.6 107.5 377.9 111.0 386.8 C114.5 395.8 112.3 417.2 111.9 430.7 C111.5 444.2 111.0 469.8 108.5 467.8 C106.0 465.8 98.7 427.0 96.7 418.9 Z" fill="#b05556"/><path d="M148.8 377.0 C145.4 378.6 132.1 377.9 128.6 386.8 C125.1 395.8 127.3 417.2 127.7 430.7 C128.1 444.2 128.6 469.8 131.1 467.8 C133.6 465.8 140.9 427.0 142.9 418.9 Z" fill="#b05556"/><path d="M78.1 518.5 C81.2 526.4 92.6 545.0 96.7 565.8 C100.8 586.6 105.1 632.8 102.6 643.5 C100.1 654.2 85.4 645.8 81.5 630.0 C77.6 614.2 79.4 562.4 79.0 548.9 Z" fill="#b05556"/><path d="M161.5 518.5 C158.4 526.4 147.0 545.0 142.9 565.8 C138.8 586.6 134.5 632.8 137.0 643.5 C139.5 654.2 154.2 645.8 158.1 630.0 C162.0 614.2 160.2 562.4 160.6 548.9 Z" fill="#b05556"/><path d="M106.0 518.5 C106.8 523.6 110.6 530.3 111.0 548.9 C111.4 567.5 109.5 617.0 108.5 630.0 C107.5 643.0 107.2 640.7 105.1 626.6 C103.0 612.5 97.3 559.0 95.8 545.5 Z" fill="#b05556"/><path d="M133.6 518.5 C132.8 523.6 129.0 530.3 128.6 548.9 C128.2 567.5 130.1 617.0 131.1 630.0 C132.1 643.0 132.4 640.7 134.5 626.6 C136.6 612.5 142.2 559.0 143.8 545.5 Z" fill="#b05556"/><path d="M52.8 650.3 C56.4 647.8 69.2 637.4 74.7 635.1 C80.2 632.9 87.7 635.1 85.7 636.8 C83.7 638.5 66.7 643.8 62.9 645.2 Z" fill="#b05556"/><path d="M186.8 650.3 C183.2 647.8 170.4 637.4 164.9 635.1 C159.4 632.9 151.9 635.1 153.9 636.8 C155.9 638.5 172.9 643.8 176.7 645.2 Z" fill="#b05556"/><path d="M59.5 652.8 C64.6 650.8 83.0 641.3 89.9 641.0 C96.8 640.7 102.6 649.1 100.9 651.1 C99.2 653.1 83.3 652.5 79.8 652.8 Z" fill="#b05556"/><path d="M180.1 652.8 C175.0 650.8 156.6 641.3 149.7 641.0 C142.8 640.7 137.0 649.1 138.7 651.1 C140.4 653.1 156.3 652.5 159.8 652.8 Z" fill="#b05556"/><path d="M69.8 91.7 C70.3 88.4 70.5 77.2 73.0 72.0 C75.5 66.8 80.5 63.0 85.0 60.5 C89.5 58.0 95.0 57.4 99.7 57.2 C104.4 57.0 110.2 58.4 113.0 59.5 C115.8 60.6 116.1 53.2 116.8 63.6 C117.5 74.0 118.3 112.4 117.0 122.2 C115.7 132.0 110.6 125.6 109.0 122.2 C107.4 118.8 109.0 107.4 107.4 101.9 C105.9 96.4 103.1 91.7 99.7 89.1 C96.3 86.5 89.1 86.6 87.0 86.1 Z" fill="#b05556"/><path d="M169.8 91.7 C169.3 88.4 169.1 77.2 166.6 72.0 C164.1 66.8 159.1 63.0 154.6 60.5 C150.1 58.0 144.6 57.4 139.9 57.2 C135.2 57.0 129.4 58.4 126.6 59.5 C123.8 60.6 123.5 53.2 122.8 63.6 C122.1 74.0 121.3 112.4 122.6 122.2 C123.9 132.0 129.0 125.6 130.6 122.2 C132.2 118.8 130.6 107.4 132.2 101.9 C133.8 96.4 136.5 91.7 139.9 89.1 C143.3 86.5 150.5 86.6 152.6 86.1 Z" fill="#b05556"/><path fill-rule="evenodd" fill="#b05556" d="M69.7 106.3 A17.3 16 0 1 0 104.3 106.3 A17.3 16 0 1 0 69.7 106.3 Z M78.7 107 A8.3 5.1 0 1 0 95.3 107 A8.3 5.1 0 1 0 78.7 107 Z"/><path fill-rule="evenodd" fill="#b05556" d="M135.3 106.3 A17.3 16 0 1 0 169.9 106.3 A17.3 16 0 1 0 135.3 106.3 Z M144.3 107 A8.3 5.1 0 1 0 160.9 107 A8.3 5.1 0 1 0 144.3 107 Z"/><ellipse cx="119.6" cy="140.7" rx="17" ry="9.3" fill="none" stroke="#b05556" stroke-width="9.5"/><path d="M75.5 125.4 C80.0 125.2 99.0 123.0 102.3 124.2 C105.5 125.4 97.0 128.9 95.0 132.5 C93.0 136.1 92.2 145.4 90.2 145.8 C88.2 146.2 84.2 136.8 83.0 135.0 Z" fill="#b05556"/><path d="M164.1 125.4 C159.6 125.2 140.6 123.0 137.3 124.2 C134.1 125.4 142.6 128.9 144.6 132.5 C146.6 136.1 147.4 145.4 149.4 145.8 C151.4 146.2 155.4 136.8 156.6 135.0 Z" fill="#b05556"/><path d="M109.3 159.8 C112.8 159.8 128.6 156.2 130.3 159.8 C132.0 163.4 121.4 177.9 119.6 181.5 Z" fill="#b05556"/><path d="M104.8 163.0 C105.7 165.0 107.9 170.0 110.0 175.0 C112.1 180.0 117.8 191.7 117.6 193.0 C117.4 194.3 110.4 184.7 109.0 183.0 Z" fill="#b05556"/><path d="M134.8 163.0 C133.9 165.0 131.7 170.0 129.6 175.0 C127.5 180.0 121.8 191.7 122.0 193.0 C122.2 194.3 129.2 184.7 130.6 183.0 Z" fill="#b05556"/>
</g>
<g transform="translate(1832.6 550)">
<use href="#sil" fill="#f9cda4"/><path d="M100 195.6 Q76 197 75.8 228 V266 Q75.8 280 90 280 L106 279.2 L118.8 277 L121 279 L134 279.5 L150 280 Q164.7 280 164.7 266 V228 Q164 197 140 195.6 Q128 196 120 206 Q112 196 100 195.6 Z" fill="#e28785"/><path d="M89.1 67.5 C88.1 70.4 83.7 77.2 83.0 84.7 C82.3 92.2 81.3 101.9 84.8 112.2 C88.2 122.5 98.3 135.7 103.7 146.6 C109.1 157.5 114.0 166.6 117.4 177.5 C120.8 188.4 122.9 204.5 124.3 211.9 C125.7 219.3 125.7 220.3 126.0 222.0" fill="none" stroke="#e52a28" stroke-width="3.4" stroke-linecap="round"/><path d="M94.2 80.4 C92.3 83.4 84.3 91.1 83.0 98.4 C81.7 105.7 81.3 113.9 86.5 124.2 C91.7 134.5 107.7 148.6 114.0 160.3 C120.3 172.1 122.3 184.4 124.3 194.7 C126.3 205.0 125.7 217.4 126.0 222.0" fill="none" stroke="#3c7fc5" stroke-width="3.4" stroke-linecap="round"/><path d="M152.7 67.5 C154.0 70.4 159.7 77.8 160.4 84.7 C161.1 91.6 160.7 99.6 157.0 108.8 C153.3 118.0 142.6 129.7 138.0 139.7 C133.4 149.7 131.4 155.2 129.5 168.9 C127.6 182.6 127.0 213.2 126.5 222.0" fill="none" stroke="#e52a28" stroke-width="3.4" stroke-linecap="round"/><path d="M148.4 78.7 C150.4 81.7 159.0 89.7 160.4 96.7 C161.8 103.7 160.4 112.5 157.0 120.8 C153.6 129.1 144.1 137.2 139.8 146.6 C135.5 156.0 133.2 164.9 131.2 177.5 C129.2 190.1 128.3 214.6 127.7 222.0" fill="none" stroke="#3c7fc5" stroke-width="3.4" stroke-linecap="round"/><path d="M112.0 229.0 C108.3 224.4 97.4 207.4 90.0 201.6 C82.6 195.8 73.9 193.3 67.6 193.9 C61.3 194.5 55.1 197.7 52.1 205.0 C49.1 212.3 50.4 226.5 49.5 237.7 C48.6 248.9 49.6 260.6 46.9 272.1 C44.2 283.6 37.2 291.7 33.2 306.5 C29.2 321.3 22.6 340.9 22.7 360.9 C22.8 380.9 32.1 415.4 34.0 426.3" fill="none" stroke="#3c7fc5" stroke-width="3.4" stroke-linecap="round"/><path d="M120.0 223.0 C115.6 218.9 101.3 202.6 93.4 198.2 C85.5 193.8 79.3 194.4 72.7 196.4 C66.1 198.4 58.9 201.9 53.8 210.2 C48.6 218.5 44.7 233.1 41.8 246.3 C38.9 259.5 38.3 275.4 36.6 289.3 C34.9 303.2 33.3 320.8 31.5 330.0 C29.7 339.2 27.8 337.6 25.8 344.5 C23.8 351.4 20.9 360.2 19.7 371.1 C18.5 382.0 18.8 403.5 18.6 410.0" fill="none" stroke="#e52a28" stroke-width="3.4" stroke-linecap="round"/><path d="M26.8 346.6 L34.0 391.6" fill="none" stroke="#e52a28" stroke-width="3.4" stroke-linecap="round"/><path d="M141.5 220.0 C143.5 216.9 148.3 205.8 153.5 201.6 C158.7 197.4 167.0 194.4 172.4 194.7 C177.8 195.0 183.3 197.6 186.2 203.3 C189.1 209.0 188.4 216.2 189.6 229.1 C190.8 242.0 191.4 267.8 193.1 280.7 C194.8 293.6 196.6 298.3 200.0 306.5 C203.4 314.7 210.4 320.9 213.7 330.0 C217.0 339.1 220.0 345.9 220.0 360.9 C220.0 375.9 214.9 410.3 213.9 420.2" fill="none" stroke="#e52a28" stroke-width="3.4" stroke-linecap="round"/><path d="M138.0 216.0 C140.6 213.0 147.5 202.2 153.5 198.2 C159.5 194.2 168.5 191.8 174.2 192.1 C179.9 192.4 185.9 193.7 187.9 199.9 C189.9 206.1 186.3 220.8 186.2 229.1 C186.0 237.4 185.5 244.3 187.0 250.0 C188.5 255.7 192.2 258.0 195.0 263.0 C197.8 268.0 201.4 274.2 204.0 280.0 C206.6 285.8 208.8 289.6 210.3 297.9 C211.8 306.2 213.4 319.5 212.8 330.0 C212.2 340.5 206.7 348.9 206.7 360.9 C206.7 372.9 211.9 395.0 212.9 401.8" fill="none" stroke="#3c7fc5" stroke-width="3.4" stroke-linecap="round"/><path d="M196.5 297.9 C196.7 301.6 196.3 312.6 197.5 320.0 C198.7 327.4 202.7 338.8 203.7 342.5" fill="none" stroke="#e52a28" stroke-width="3.4" stroke-linecap="round"/><path d="M128.6 258.0 L129.5 346.0" fill="none" stroke="#e52a28" stroke-width="3.4" stroke-linecap="round"/><path d="M124.3 258.0 L123.4 346.0" fill="none" stroke="#3c7fc5" stroke-width="3.4" stroke-linecap="round"/><path d="M137.0 218.8 C139.5 219.8 148.9 222.1 152.0 225.0 C155.1 227.9 156.2 231.5 155.5 236.0 C154.8 240.5 151.5 248.2 148.0 252.0 C144.5 255.8 136.8 257.8 134.6 259.0 Z" fill="#3c7fc5"/><path d="M126.0 218.0 C128.3 218.2 136.8 217.2 140.0 219.5 C143.2 221.8 144.8 226.9 145.0 232.0 C145.2 237.1 144.0 245.2 141.0 250.0 C138.0 254.8 129.8 259.0 127.0 261.0 C124.2 263.0 127.2 264.2 124.5 262.0 C121.8 259.8 113.2 253.0 110.5 248.0 C107.8 243.0 108.2 236.5 108.5 232.0 C108.8 227.5 111.4 222.8 112.0 221.0 Z" fill="#e52a28"/><path d="M119.9 337.4 C115.8 337.4 101.3 336.2 95.3 337.4 C89.3 338.6 84.4 342.3 84.1 344.5 C83.8 346.7 87.7 351.4 93.3 350.7 C98.9 350.0 113.7 342.1 117.8 340.4" fill="none" stroke="#e52a28" stroke-width="3.4" stroke-linecap="round"/><path d="M121.9 342.5 C118.8 344.9 110.0 354.8 103.5 356.8 C97.0 358.9 86.8 356.7 83.1 354.8 C79.3 352.9 79.3 347.0 81.0 345.6 C82.7 344.2 86.5 347.1 93.3 346.6 C100.1 346.1 117.1 343.2 121.9 342.5" fill="none" stroke="#3c7fc5" stroke-width="3.4" stroke-linecap="round"/><path d="M130.1 340.4 C133.5 340.6 144.9 340.6 150.5 341.5 C156.1 342.4 162.1 343.2 163.8 345.6 C165.5 348.0 163.6 354.3 160.7 355.8 C157.8 357.3 151.5 356.7 146.4 354.8 C141.3 352.9 132.8 346.2 130.1 344.5" fill="none" stroke="#e52a28" stroke-width="3.4" stroke-linecap="round"/><path d="M128.0 350.7 C130.1 352.9 135.2 362.0 140.3 364.0 C145.4 366.0 155.3 364.6 158.7 362.9 C162.1 361.2 164.1 355.4 160.7 353.7 C157.3 352.0 142.0 352.9 138.3 352.7" fill="none" stroke="#3c7fc5" stroke-width="3.4" stroke-linecap="round"/><path d="M121.9 346.6 C118.8 354.1 108.6 375.6 103.5 391.6 C98.4 407.6 94.1 425.7 91.2 442.7 C88.3 459.7 86.3 475.1 86.1 493.8 C85.9 512.5 88.7 538.1 90.2 555.1 C91.7 572.1 94.3 580.7 95.3 596.0 C96.3 611.3 96.1 638.6 96.3 647.1" fill="none" stroke="#e52a28" stroke-width="3.4" stroke-linecap="round"/><path d="M90.2 555.1 L81.0 606.2" fill="none" stroke="#e52a28" stroke-width="3.4" stroke-linecap="round"/><path d="M95.3 622.6 C93.6 625.5 88.6 635.6 85.0 640.0 C81.4 644.4 75.7 647.7 73.8 649.2" fill="none" stroke="#e52a28" stroke-width="3.4" stroke-linecap="round"/><path d="M123.9 350.7 C122.2 357.5 119.5 379.7 113.7 391.6 C107.9 403.5 94.1 410.3 89.2 422.2 C84.3 434.1 83.1 447.8 84.1 463.1 C85.1 478.4 92.4 498.9 95.3 514.2 C98.2 529.5 101.7 539.8 101.4 555.1 C101.1 570.4 97.0 592.2 93.3 606.2 C89.6 620.2 81.4 633.5 79.0 639.0" fill="none" stroke="#3c7fc5" stroke-width="3.4" stroke-linecap="round"/><path d="M130.1 360.9 C131.8 367.7 136.6 388.2 140.3 401.8 C144.1 415.4 151.6 427.4 152.6 442.7 C153.6 458.0 148.8 476.8 146.4 493.8 C144.0 510.8 139.5 527.9 138.3 544.9 C137.1 561.9 139.3 579.0 139.3 596.0 C139.3 613.0 138.5 638.6 138.3 647.1" fill="none" stroke="#e52a28" stroke-width="3.4" stroke-linecap="round"/><path d="M142.4 616.5 C144.0 620.1 148.3 632.4 152.0 638.0 C155.7 643.6 162.7 648.2 164.8 650.2" fill="none" stroke="#e52a28" stroke-width="3.4" stroke-linecap="round"/><path d="M128.0 360.9 C129.0 366.0 130.4 378.0 134.2 391.6 C137.9 405.2 147.4 427.4 150.5 442.7 C153.6 458.0 154.6 468.3 152.6 483.6 C150.6 498.9 141.0 519.4 138.3 534.7 C135.6 550.0 134.8 562.0 136.2 575.6 C137.5 589.2 141.1 605.4 146.4 616.5 C151.7 627.6 164.3 637.8 167.9 642.0" fill="none" stroke="#3c7fc5" stroke-width="3.4" stroke-linecap="round"/><path d="M148.5 524.5 C148.2 529.6 145.4 544.6 146.4 555.1 C147.4 565.6 153.2 582.3 154.6 587.8" fill="none" stroke="#3c7fc5" stroke-width="3.4" stroke-linecap="round"/>
</g>
<g transform="translate(2091.2 550)">
<use href="#sil" fill="#f9cda4"/><path d="M118.6 51.2 C116.7 51.0 111.0 49.6 107.0 50.0 C103.0 50.4 98.1 51.8 94.9 53.8 C91.7 55.8 90.4 60.0 88.0 62.3 C85.6 64.6 82.5 65.0 80.3 67.5 C78.1 70.0 76.4 73.6 75.1 77.0 C73.8 80.4 72.4 84.8 72.6 88.1 C72.8 91.4 73.7 94.7 76.0 96.7 C78.3 98.7 82.0 99.2 86.3 100.2 C90.6 101.2 96.9 102.6 101.8 102.7 C106.7 102.8 111.8 101.3 115.5 101.0 C119.2 100.7 120.1 101.1 124.1 101.0 C128.1 100.9 133.9 100.6 139.6 100.2 C145.3 99.8 154.1 100.1 158.5 98.4 C162.9 96.7 165.3 93.3 166.3 89.9 C167.3 86.5 165.8 81.5 164.5 77.8 C163.2 74.1 161.2 71.2 158.5 67.5 C155.8 63.8 152.2 58.4 148.2 55.5 C144.2 52.6 138.5 51.0 134.5 50.3 C130.5 49.6 125.8 51.1 124.1 51.2 Z" fill="#ee9994"/><path d="M99.2 52.9 C98.5 53.9 94.3 57.0 94.9 58.9 C95.5 60.8 100.1 63.8 102.7 64.1 C105.3 64.4 108.6 59.5 110.4 60.6 C112.2 61.7 114.1 67.8 113.8 70.9 C113.5 74.1 108.7 76.3 108.7 79.5 C108.7 82.7 114.7 87.0 113.8 89.9 C112.9 92.8 105.5 94.7 103.5 96.7 C101.5 98.7 102.1 101.0 101.8 101.9" fill="none" stroke="#da8582" stroke-width="1.9" stroke-linecap="round"/><path d="M84.6 70.9 C85.8 70.6 88.9 68.6 91.5 69.2 C94.1 69.8 99.2 72.4 100.1 74.4 C100.9 76.4 96.6 79.3 96.6 81.3 C96.6 83.3 100.7 84.7 100.1 86.4 C99.5 88.1 94.1 89.6 93.2 91.6 C92.3 93.6 94.6 97.3 94.9 98.4" fill="none" stroke="#da8582" stroke-width="1.9" stroke-linecap="round"/><path d="M76.0 81.3 C77.2 81.9 81.2 83.0 82.9 84.7 C84.6 86.4 86.0 89.6 86.3 91.6 C86.6 93.6 84.9 95.8 84.6 96.7" fill="none" stroke="#da8582" stroke-width="1.9" stroke-linecap="round"/><path d="M124.1 53.8 C124.7 54.9 125.3 59.8 127.6 60.6 C129.9 61.5 135.6 58.0 137.9 58.9 C140.2 59.8 142.5 63.2 141.3 65.8 C140.2 68.4 133.0 71.8 131.0 74.4 C129.0 77.0 127.9 79.9 129.3 81.3 C130.7 82.7 137.9 82.7 139.6 83.0" fill="none" stroke="#da8582" stroke-width="1.9" stroke-linecap="round"/><path d="M144.8 69.2 C146.2 68.9 151.4 66.6 153.4 67.5 C155.4 68.4 157.1 72.4 156.8 74.4 C156.5 76.4 151.3 78.1 151.6 79.5 C151.9 80.9 156.8 80.7 158.5 83.0 C160.2 85.3 161.4 91.6 162.0 93.3" fill="none" stroke="#da8582" stroke-width="1.9" stroke-linecap="round"/><path d="M129.3 91.6 C130.2 91.3 132.8 89.1 134.5 89.9 C136.2 90.8 138.8 95.6 139.6 96.7" fill="none" stroke="#da8582" stroke-width="1.9" stroke-linecap="round"/><path d="M143.1 84.7 C144.2 85.0 148.5 84.7 149.9 86.4 C151.3 88.1 150.2 93.3 151.6 95.0 C153.0 96.7 157.3 96.4 158.5 96.7" fill="none" stroke="#da8582" stroke-width="1.9" stroke-linecap="round"/><line x1="119.6" y1="54" x2="119.6" y2="97" stroke="#da8582" stroke-width="1.6"/><path d="M120.6 99 V358" stroke="#ef9a93" stroke-width="9.5"/><path d="M116.0 105.3 C113.3 106.8 104.7 110.9 100.0 114.0 C95.3 117.1 90.8 120.9 88.0 124.0 C85.2 127.1 83.8 131.3 82.9 132.8" fill="none" stroke="#ef9a93" stroke-width="4.3" stroke-linecap="round" stroke-linejoin="round"/><path d="M123.6 105.3 C126.3 106.8 134.9 110.9 139.6 114.0 C144.3 117.1 148.8 120.9 151.6 124.0 C154.4 127.1 155.8 131.3 156.7 132.8" fill="none" stroke="#ef9a93" stroke-width="4.3" stroke-linecap="round" stroke-linejoin="round"/><path d="M116.0 124.2 C114.0 125.3 107.3 128.9 104.0 131.0 C100.7 133.1 97.8 135.0 96.0 137.0 C94.2 139.0 93.7 142.1 93.2 143.1" fill="none" stroke="#ef9a93" stroke-width="4.3" stroke-linecap="round" stroke-linejoin="round"/><path d="M123.6 124.2 C125.6 125.3 132.3 128.9 135.6 131.0 C138.9 133.1 141.8 135.0 143.6 137.0 C145.4 139.0 145.9 142.1 146.4 143.1" fill="none" stroke="#ef9a93" stroke-width="4.3" stroke-linecap="round" stroke-linejoin="round"/><path d="M116.0 139.7 C114.8 140.4 110.8 141.8 109.0 144.0 C107.2 146.2 105.8 151.2 105.2 152.6" fill="none" stroke="#ef9a93" stroke-width="4.3" stroke-linecap="round" stroke-linejoin="round"/><path d="M123.6 139.7 C124.8 140.4 128.8 141.8 130.6 144.0 C132.4 146.2 133.8 151.2 134.4 152.6" fill="none" stroke="#ef9a93" stroke-width="4.3" stroke-linecap="round" stroke-linejoin="round"/><path d="M116.0 177.5 C114.0 179.1 108.4 184.7 104.0 187.0 C99.6 189.3 95.1 190.0 89.8 191.3 C84.5 192.6 76.9 193.6 72.0 195.0 C67.1 196.4 64.4 197.1 60.5 199.9 C56.6 202.7 51.8 207.3 48.5 211.9 C45.2 216.5 42.1 224.8 40.8 227.4" fill="none" stroke="#ef9a93" stroke-width="5" stroke-linecap="round" stroke-linejoin="round"/><path d="M123.6 177.5 C125.6 179.1 131.2 184.7 135.6 187.0 C140.0 189.3 144.5 190.0 149.8 191.3 C155.1 192.6 162.7 193.6 167.6 195.0 C172.5 196.4 175.2 197.1 179.1 199.9 C183.0 202.7 187.8 207.3 191.1 211.9 C194.4 216.5 197.5 224.8 198.8 227.4" fill="none" stroke="#ef9a93" stroke-width="5" stroke-linecap="round" stroke-linejoin="round"/><path d="M69.1 197.5 C66.5 200.5 57.1 208.6 53.7 215.3 C50.3 222.0 50.2 229.7 48.5 237.7 C46.8 245.7 45.0 253.5 43.3 263.5 C41.6 273.5 39.6 286.8 38.2 297.9 C36.8 309.0 36.4 319.5 34.8 330.0 C33.1 340.5 29.7 352.3 28.3 360.9 C26.9 369.4 27.0 375.2 26.3 381.3 C25.6 387.4 23.5 390.2 24.2 397.7 C24.9 405.2 29.4 421.5 30.4 426.3" fill="none" stroke="#ef9a93" stroke-width="5" stroke-linecap="round" stroke-linejoin="round"/><path d="M170.5 197.5 C173.1 200.5 182.5 208.6 185.9 215.3 C189.3 222.0 189.4 229.7 191.1 237.7 C192.8 245.7 194.6 253.5 196.3 263.5 C198.0 273.5 200.0 286.8 201.4 297.9 C202.8 309.0 203.2 319.5 204.8 330.0 C206.5 340.5 209.9 352.3 211.3 360.9 C212.7 369.4 212.6 375.2 213.3 381.3 C214.0 387.4 216.1 390.2 215.4 397.7 C214.7 405.2 210.2 421.5 209.2 426.3" fill="none" stroke="#ef9a93" stroke-width="5" stroke-linecap="round" stroke-linejoin="round"/><path d="M45.1 253.2 C43.6 256.0 38.1 264.3 36.0 270.0 C33.9 275.7 32.8 284.6 32.2 287.5" fill="none" stroke="#ef9a93" stroke-width="4.3" stroke-linecap="round" stroke-linejoin="round"/><path d="M194.5 253.2 C196.0 256.0 201.4 264.3 203.6 270.0 C205.8 275.7 206.8 284.6 207.4 287.5" fill="none" stroke="#ef9a93" stroke-width="4.3" stroke-linecap="round" stroke-linejoin="round"/><path d="M30.4 320.0 C29.3 322.7 25.5 329.9 24.0 336.0 C22.5 342.1 21.7 353.3 21.2 356.8" fill="none" stroke="#ef9a93" stroke-width="4.3" stroke-linecap="round" stroke-linejoin="round"/><path d="M209.2 320.0 C210.3 322.7 214.1 329.9 215.6 336.0 C217.1 342.1 217.9 353.3 218.4 356.8" fill="none" stroke="#ef9a93" stroke-width="4.3" stroke-linecap="round" stroke-linejoin="round"/><path d="M26.3 381.3 C28.2 383.1 34.6 388.4 38.0 392.0 C41.4 395.6 45.2 401.0 46.7 402.8" fill="none" stroke="#ef9a93" stroke-width="4.3" stroke-linecap="round" stroke-linejoin="round"/><path d="M213.3 381.3 C211.3 383.1 205.0 388.4 201.6 392.0 C198.2 395.6 194.3 401.0 192.9 402.8" fill="none" stroke="#ef9a93" stroke-width="4.3" stroke-linecap="round" stroke-linejoin="round"/><path d="M116.0 201.6 C113.3 203.3 105.0 207.4 100.0 211.6 C95.0 215.8 90.6 221.9 86.0 226.5 C81.4 231.1 74.8 237.2 72.6 239.4" fill="none" stroke="#ef9a93" stroke-width="4.3" stroke-linecap="round" stroke-linejoin="round"/><path d="M123.6 201.6 C126.3 203.3 134.6 207.4 139.6 211.6 C144.6 215.8 149.0 221.9 153.6 226.5 C158.2 231.1 164.8 237.2 167.0 239.4" fill="none" stroke="#ef9a93" stroke-width="4.3" stroke-linecap="round" stroke-linejoin="round"/><path d="M116.0 224.0 C113.3 225.7 105.0 229.4 100.0 234.0 C95.0 238.6 89.8 246.0 86.0 251.4 C82.2 256.9 78.4 264.3 76.9 266.9" fill="none" stroke="#ef9a93" stroke-width="4.3" stroke-linecap="round" stroke-linejoin="round"/><path d="M123.6 224.0 C126.3 225.7 134.6 229.4 139.6 234.0 C144.6 238.6 149.8 246.0 153.6 251.4 C157.4 256.9 161.2 264.3 162.7 266.9" fill="none" stroke="#ef9a93" stroke-width="4.3" stroke-linecap="round" stroke-linejoin="round"/><path d="M116.0 249.7 C113.3 251.4 105.0 254.5 100.0 259.7 C95.0 264.9 90.0 274.0 86.0 280.6 C82.0 287.3 77.7 296.4 76.0 299.6" fill="none" stroke="#ef9a93" stroke-width="4.3" stroke-linecap="round" stroke-linejoin="round"/><path d="M123.6 249.7 C126.3 251.4 134.6 254.5 139.6 259.7 C144.6 264.9 149.6 274.0 153.6 280.6 C157.6 287.3 161.9 296.4 163.6 299.6" fill="none" stroke="#ef9a93" stroke-width="4.3" stroke-linecap="round" stroke-linejoin="round"/><path d="M116.0 280.7 C113.3 282.4 105.0 286.1 100.0 290.7 C95.0 295.3 89.8 302.7 86.0 308.2 C82.2 313.7 78.4 321.1 76.9 323.7" fill="none" stroke="#ef9a93" stroke-width="4.3" stroke-linecap="round" stroke-linejoin="round"/><path d="M123.6 280.7 C126.3 282.4 134.6 286.1 139.6 290.7 C144.6 295.3 149.8 302.7 153.6 308.2 C157.4 313.7 161.2 321.1 162.7 323.7" fill="none" stroke="#ef9a93" stroke-width="4.3" stroke-linecap="round" stroke-linejoin="round"/><path d="M116.0 308.2 C113.3 309.9 105.0 314.0 100.0 318.2 C95.0 322.4 89.4 328.7 86.0 333.4 C82.6 338.1 80.5 344.4 79.4 346.6" fill="none" stroke="#ef9a93" stroke-width="4.3" stroke-linecap="round" stroke-linejoin="round"/><path d="M123.6 308.2 C126.3 309.9 134.6 314.0 139.6 318.2 C144.6 322.4 150.2 328.7 153.6 333.4 C157.0 338.1 159.1 344.4 160.2 346.6" fill="none" stroke="#ef9a93" stroke-width="4.3" stroke-linecap="round" stroke-linejoin="round"/><path d="M116.0 334.3 C113.3 336.0 105.0 339.4 100.0 344.3 C95.0 349.2 89.4 357.6 86.0 363.8 C82.6 370.0 80.5 378.4 79.4 381.3" fill="none" stroke="#ef9a93" stroke-width="4.3" stroke-linecap="round" stroke-linejoin="round"/><path d="M123.6 334.3 C126.3 336.0 134.6 339.4 139.6 344.3 C144.6 349.2 150.2 357.6 153.6 363.8 C157.0 370.0 159.1 378.4 160.2 381.3" fill="none" stroke="#ef9a93" stroke-width="4.3" stroke-linecap="round" stroke-linejoin="round"/><path d="M120.3 350.0 C118.9 353.3 115.1 364.8 112.0 370.0 C108.9 375.2 105.3 374.3 101.9 381.3 C98.5 388.3 93.1 401.8 91.7 412.0 C90.3 422.2 93.7 429.1 93.7 442.7 C93.7 456.3 92.0 476.8 91.7 493.8 C91.4 510.8 91.5 524.5 91.7 544.9 C91.9 565.3 91.7 600.7 92.7 616.4 C93.7 632.1 97.5 633.8 97.8 638.9 C98.1 644.0 95.3 645.7 94.8 647.1" fill="none" stroke="#ef9a93" stroke-width="6.5" stroke-linecap="round" stroke-linejoin="round"/><path d="M119.3 350.0 C120.7 353.3 124.5 364.8 127.6 370.0 C130.7 375.2 134.3 374.3 137.7 381.3 C141.1 388.3 146.5 401.8 147.9 412.0 C149.3 422.2 145.9 429.1 145.9 442.7 C145.9 456.3 147.6 476.8 147.9 493.8 C148.2 510.8 148.1 524.5 147.9 544.9 C147.7 565.3 147.9 600.7 146.9 616.4 C145.9 632.1 142.2 633.8 141.8 638.9 C141.5 644.0 144.3 645.7 144.8 647.1" fill="none" stroke="#ef9a93" stroke-width="6.5" stroke-linecap="round" stroke-linejoin="round"/><path d="M92.7 622.5 C90.6 625.4 85.6 635.6 80.0 640.0 C74.4 644.4 62.5 647.6 59.0 649.1" fill="none" stroke="#ef9a93" stroke-width="4.3" stroke-linecap="round" stroke-linejoin="round"/><path d="M146.9 622.5 C149.0 625.4 154.0 635.6 159.6 640.0 C165.2 644.4 177.1 647.6 180.6 649.1" fill="none" stroke="#ef9a93" stroke-width="4.3" stroke-linecap="round" stroke-linejoin="round"/><path d="M91.7 407.9 C90.1 413.2 84.0 428.1 82.0 440.0 C80.0 451.9 79.8 472.8 79.4 479.4" fill="none" stroke="#ef9a93" stroke-width="4.3" stroke-linecap="round" stroke-linejoin="round"/><path d="M147.9 407.9 C149.5 413.2 155.5 428.1 157.6 440.0 C159.7 451.9 159.8 472.8 160.2 479.4" fill="none" stroke="#ef9a93" stroke-width="4.3" stroke-linecap="round" stroke-linejoin="round"/><path d="M97.8 440.6 C98.8 445.5 102.5 459.4 104.0 470.0 C105.5 480.6 106.5 498.3 107.0 504.0" fill="none" stroke="#ef9a93" stroke-width="4.3" stroke-linecap="round" stroke-linejoin="round"/><path d="M141.8 440.6 C140.8 445.5 137.1 459.4 135.6 470.0 C134.1 480.6 133.1 498.3 132.6 504.0" fill="none" stroke="#ef9a93" stroke-width="4.3" stroke-linecap="round" stroke-linejoin="round"/><path d="M89.7 522.4 C88.4 527.8 83.4 543.4 82.0 555.0 C80.6 566.6 81.6 585.8 81.5 591.9" fill="none" stroke="#ef9a93" stroke-width="4.3" stroke-linecap="round" stroke-linejoin="round"/><path d="M149.9 522.4 C151.2 527.8 156.2 543.4 157.6 555.0 C159.0 566.6 158.0 585.8 158.1 591.9" fill="none" stroke="#ef9a93" stroke-width="4.3" stroke-linecap="round" stroke-linejoin="round"/><path d="M96.8 565.3 C97.7 569.4 100.8 582.2 102.0 590.0 C103.2 597.8 103.7 608.6 104.0 612.3" fill="none" stroke="#ef9a93" stroke-width="4.3" stroke-linecap="round" stroke-linejoin="round"/><path d="M142.8 565.3 C141.9 569.4 138.8 582.2 137.6 590.0 C136.4 597.8 135.9 608.6 135.6 612.3" fill="none" stroke="#ef9a93" stroke-width="4.3" stroke-linecap="round" stroke-linejoin="round"/>
</g>
<g transform="translate(2349.8 550)">
<use href="#sil" fill="#f9cda4"/><rect x="97.8" y="128.2" width="44.2" height="18.5" rx="7" fill="#ef9b94"/><rect x="104.5" y="128.2" width="30.4" height="6" rx="1" fill="#fbfaf7"/><rect x="104.5" y="141.5" width="30.4" height="6" rx="1" fill="#fbfaf7"/><path d="M120.0 146.0 C120.1 151.3 120.5 165.1 120.8 177.8 C121.0 190.5 121.1 212.6 121.5 222.3 C121.9 232.0 122.2 232.2 123.0 236.0 C123.8 239.8 124.7 242.3 126.0 244.8 C127.3 247.3 129.0 249.0 131.0 251.0 C133.0 253.0 136.8 256.0 138.0 257.0" fill="none" stroke="#ef9b94" stroke-width="6"/><path d="M134.9 250.7 C136.9 250.3 143.0 247.8 146.7 248.5 C150.4 249.2 154.8 251.4 157.1 255.2 C159.4 259.0 160.8 266.3 160.8 271.5 C160.8 276.7 159.4 281.9 157.1 286.3 C154.8 290.8 150.4 295.9 146.7 298.2 C143.0 300.5 138.6 300.6 134.9 300.4 C131.2 300.1 127.5 298.5 124.5 296.7 C121.5 294.9 118.1 292.3 117.1 289.3 C116.1 286.3 116.6 282.1 118.6 278.9 C120.6 275.7 126.3 273.2 128.9 270.0 C131.5 266.8 133.2 261.3 134.1 259.6 Z" fill="#ef9b94"/><path d="M83.0 264.1 C85.0 263.5 86.4 260.9 94.8 260.4 C103.2 259.9 126.5 260.2 133.4 261.1 C140.3 262.0 137.1 263.1 136.3 265.6 C135.6 268.1 132.6 272.4 128.9 275.9 C125.2 279.3 119.8 282.4 114.1 286.3 C108.4 290.2 99.4 296.9 94.8 299.6 C90.2 302.3 89.0 303.1 86.7 302.6 C84.4 302.1 82.0 300.6 80.8 296.7 C79.6 292.8 79.5 281.9 79.3 278.9 Z" fill="#823927"/><path d="M114.0 287.0 C113.3 288.3 112.8 292.8 110.0 295.0 C107.2 297.2 99.7 298.5 97.0 300.0 C94.3 301.5 94.5 303.3 94.0 304.0" fill="none" stroke="#c07d78" stroke-width="5" stroke-linecap="round"/><path d="M114.5 289.0 C113.1 290.3 108.8 294.6 106.0 297.0 C103.2 299.4 99.0 302.4 97.6 303.5" fill="none" stroke="#be7d76" stroke-width="8" stroke-linecap="round"/><rect x="81.8" y="320" width="66" height="45.3" rx="8" fill="#ef9b94"/><path d="M78.5 337.0 C78.5 333.8 78.1 322.7 78.5 318.0 C78.9 313.3 79.2 311.2 81.0 309.0 C82.8 306.8 82.5 305.9 89.0 305.0 C95.5 304.1 110.0 303.6 120.0 303.5 C130.0 303.4 142.8 303.8 149.0 304.7 C155.2 305.6 155.6 306.6 157.5 309.0 C159.4 311.4 160.0 312.3 160.7 318.8 C161.4 325.3 161.8 341.0 161.5 347.9 C161.2 354.8 160.4 357.1 159.0 360.0 C157.6 362.9 159.7 364.1 153.2 365.3 C146.7 366.5 126.4 367.4 120.0 367.0 C113.6 366.6 115.5 364.9 115.0 362.8 C114.5 360.7 114.8 356.4 116.7 354.5 C118.6 352.6 122.4 352.0 126.6 351.2 C130.8 350.4 138.7 351.4 141.6 349.5 C144.5 347.6 143.6 343.9 144.0 340.0 C144.4 336.1 145.0 328.8 144.0 326.0 C143.0 323.2 146.7 323.5 138.0 323.0 C129.3 322.5 100.0 321.8 92.0 323.0 C84.0 324.2 90.3 327.5 90.0 330.0 C89.7 332.5 91.3 336.5 90.1 337.9 C88.9 339.3 83.9 338.4 82.7 338.5 Z" fill="#be7d76"/><path d="M83.9 337.1 C84.0 334.1 82.8 322.8 84.3 318.8 C85.8 314.8 88.8 314.0 92.6 313.0 C96.4 312.0 102.5 312.7 107.3 313.0 C112.1 313.3 116.9 314.8 121.5 314.7 C126.1 314.6 130.0 311.4 134.7 312.2 C139.4 313.0 146.6 316.5 149.7 319.7 C152.8 322.9 152.6 326.6 153.2 331.3 C153.8 336.0 154.6 343.8 153.2 347.9 C151.8 352.0 149.1 354.8 144.9 356.2 C140.8 357.6 132.7 355.5 128.3 356.2 C123.9 356.9 120.2 358.8 118.3 360.3 C116.4 361.8 117.0 364.5 116.7 365.3" fill="none" stroke="#c65a5d" stroke-width="1.5"/><path d="M85.0 339.0 C86.2 338.7 89.8 338.7 92.0 337.0 C94.2 335.3 96.3 330.0 98.0 329.0 C99.7 328.0 101.8 329.0 102.0 331.0 C102.2 333.0 98.7 338.8 99.0 341.0 C99.3 343.2 102.3 344.7 104.0 344.0 C105.7 343.3 107.5 339.2 109.0 337.0 C110.5 334.8 111.5 331.5 113.0 331.0 C114.5 330.5 116.7 332.5 118.0 334.0 C119.3 335.5 119.5 339.2 121.0 340.0 C122.5 340.8 125.3 340.5 127.0 339.0 C128.7 337.5 129.5 331.8 131.0 331.0 C132.5 330.2 135.0 332.2 136.0 334.0 C137.0 335.8 138.0 340.0 137.0 342.0 C136.0 344.0 132.2 344.8 130.0 346.0 C127.8 347.2 126.0 348.0 124.0 349.0 C122.0 350.0 119.5 350.2 118.0 352.0 C116.5 353.8 116.3 359.3 115.0 360.0 C113.7 360.7 111.8 357.3 110.0 356.0 C108.2 354.7 106.0 352.0 104.0 352.0 C102.0 352.0 99.5 356.3 98.0 356.0 C96.5 355.7 96.5 351.3 95.0 350.0 C93.5 348.7 90.8 349.3 89.0 348.0 C87.2 346.7 84.8 343.0 84.0 342.0" fill="none" stroke="#c98079" stroke-width="1.4"/><path d="M106 323 Q110 330 114 323" fill="none" stroke="#c98079" stroke-width="1.4"/>
</g>
</svg>
</body></html>
